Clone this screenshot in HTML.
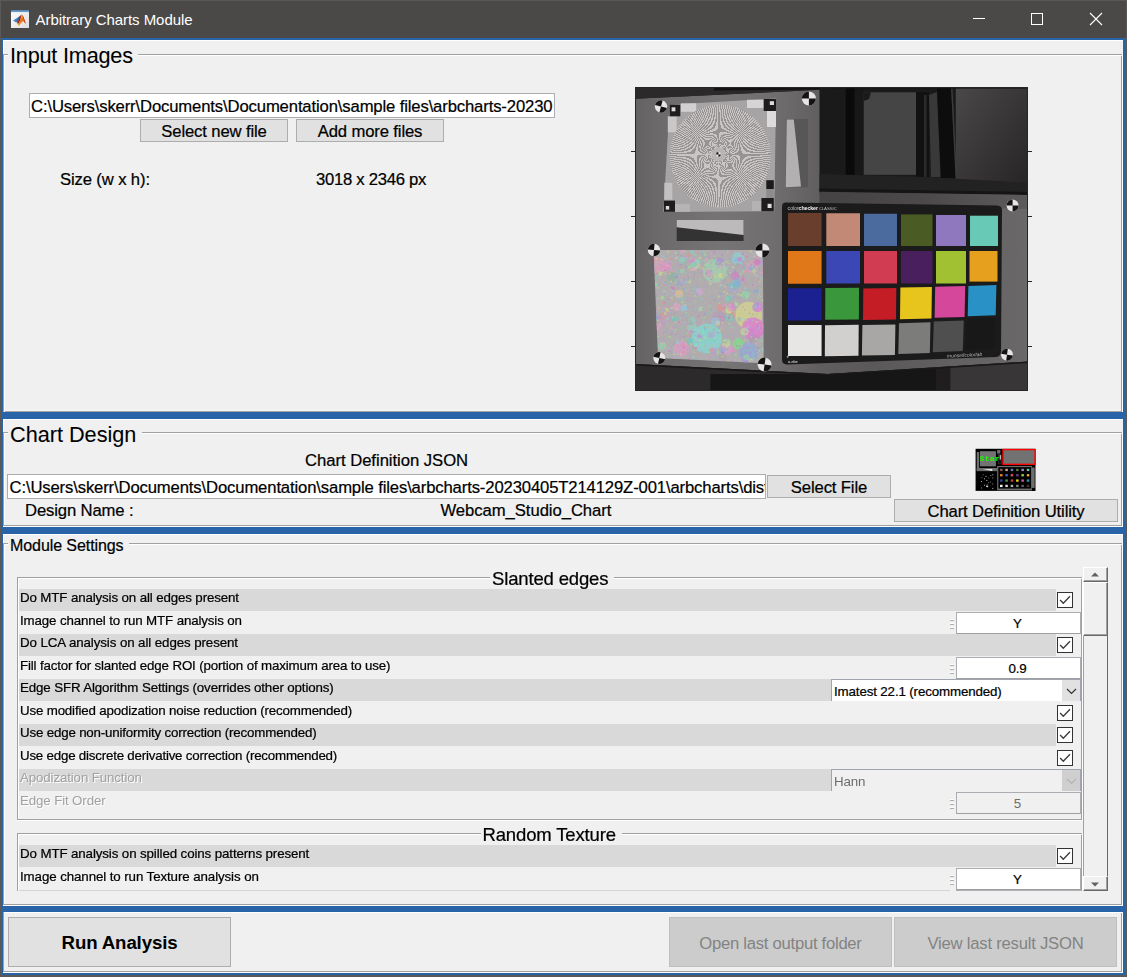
<!DOCTYPE html>
<html>
<head>
<meta charset="utf-8">
<title>Arbitrary Charts Module</title>
<style>
html,body{margin:0;padding:0;}
body{-webkit-text-stroke:0.22px currentColor;width:1127px;height:977px;overflow:hidden;position:relative;background:#2a64a8;font-family:"Liberation Sans",sans-serif;color:#000;}
.abs,.abs *{position:absolute;box-sizing:border-box;}
div,span,svg{position:absolute;box-sizing:border-box;}
.t{white-space:nowrap;line-height:1;}
#frame{left:0;top:0;width:1127px;height:977px;background:#5b5957;}
#blue{left:1px;top:38px;width:1125px;height:937px;background:#2a64a8;}
#titlebar{left:1px;top:1px;width:1125px;height:37px;background:#4b4947;}
#titlebar .t{-webkit-text-stroke:0;color:#fff;font-size:15px;left:34.5px;top:11px;letter-spacing:-0.06px;}
.panel{background:#f0f0f0;left:3px;width:1120px;}
.gline{background:#a0a0a0;}
.wline{background:#fff;}
.ptitle{background:#f0f0f0;padding:0 2px;}
.btn{background:#e1e1e1;border:1px solid #adadad;text-align:center;font-size:16.67px;letter-spacing:-0.135px;white-space:nowrap;}
.btn.dis{background:#cccccc;border:1px solid #bfbfbf;color:#838383;-webkit-text-stroke:0;}
.edit{background:#fff;border:1px solid #abadb3;white-space:nowrap;overflow:hidden;}
.f16{font-size:16.67px;letter-spacing:-0.135px;}
.f13{font-size:13.33px;}
.row{left:19px;width:1037px;background:#d9d9d9;}
.lbl{left:20px;font-size:13.33px;letter-spacing:-0.135px;white-space:nowrap;line-height:1;}
.lbl.dis{color:#a0a0a0;text-shadow:1px 1px 0 #fff;-webkit-text-stroke:0;}
.cb{left:1057px;width:16px;height:16px;background:#fff;border:1px solid #333;}
.cb svg{left:0;top:0;width:14px;height:14px;}
.grip{left:950px;width:4px;height:11px;}
.grip i{position:absolute;left:0;width:4px;height:1px;background:#aeaeae;}
.grip b{position:absolute;left:0;width:4px;height:1px;background:#fff;}
.grip b{position:absolute;left:0;width:4px;height:1px;background:#fff;}
.grip b{position:absolute;left:0;width:4px;height:1px;background:#fff;}
.grip b{position:absolute;left:0;width:4px;height:1px;background:#fff;}
.grip b{position:absolute;left:0;width:4px;height:1px;background:#fff;}
.grip b{position:absolute;left:0;width:4px;height:1px;background:#fff;}
.grip b{position:absolute;left:0;width:4px;height:1px;background:#fff;}
.ed2{padding-right:2px;left:956px;width:125px;height:22px;background:#fff;border:1px solid #abadb3;border-bottom-color:#a0a0a0;text-align:center;font-size:13.33px;letter-spacing:-0.135px;}
.combo{left:831px;width:250px;height:22px;background:#fff;border-left:1px solid #a0a4b0;border-top:1px solid #a0a4b0;border-right:1px solid #a0a4b0;font-size:13.33px;letter-spacing:-0.135px;}
</style>
</head>
<body>
<div id="frame"></div>
<div id="blue"></div>
<div id="titlebar">
  <svg id="mlicon" style="left:9.6px;top:8.6px;width:18.6px;height:18.6px" viewBox="0 0 18.6 18.6"><defs><linearGradient id="mlbg" x1="0" y1="0" x2="1" y2="1"><stop offset="0" stop-color="#ffffff"/><stop offset="1" stop-color="#dcdce0"/></linearGradient>
<linearGradient id="mlbl" x1="0" y1="1" x2="1" y2="0"><stop offset="0" stop-color="#4a9ad8"/><stop offset="1" stop-color="#23508c"/></linearGradient>
<linearGradient id="mlor" x1="0" y1="0" x2="0" y2="1"><stop offset="0" stop-color="#e8a024"/><stop offset="0.45" stop-color="#ea6c1e"/><stop offset="0.8" stop-color="#ec8a22"/><stop offset="1" stop-color="#f0b82c"/></linearGradient>
<filter id="mlf" color-interpolation-filters="sRGB"><feGaussianBlur stdDeviation="0.35"/></filter></defs>
<rect x="0" y="0" width="18.4" height="18.4" fill="url(#mlbg)"/>
<rect x="0" y="0" width="18.4" height="2.1" fill="#6a9cc8"/><rect x="0" y="0" width="18.4" height="0.6" fill="#4a7aa8"/>
<g filter="url(#mlf)">
<path d="M2 10.6L6.6 7.7L9.7 5.2L9.3 8L6.6 12.4L4.6 12.2Z" fill="url(#mlbl)"/>
<path d="M10.3 4.3L9.2 6.5L6.2 12.4L7 14.4L9 11L10.2 7Z" fill="#a3221a"/>
<path d="M10.7 4.1L12.2 6.6L13.6 10.4L14.9 13.7L13.4 12.3L11.9 11.3L10.2 13L8.8 15L7.6 15.9L6.9 14.3L8.6 11.4L9.9 7.4Z" fill="url(#mlor)"/>
<path d="M11.2 4.4L12.6 7L14.9 13.7L13.6 12.4L12.4 9Z" fill="#c8321e"/>
<path d="M10.6 4.6L11.1 6.6L10.9 9.4L10.2 7.4Z" fill="#f0b428"/>
</g></svg>
  <span class="t">Arbitrary Charts Module</span>
  <svg style="left:970px;top:-1px;width:156px;height:38px" viewBox="0 0 156 38">
    <path d="M2 18.5H14" stroke="#fff" stroke-width="1" fill="none"/>
    <rect x="60.5" y="13.5" width="11" height="11" stroke="#fff" stroke-width="1" fill="none"/>
    <path d="M119 13L131 25M131 13L119 25" stroke="#fff" stroke-width="1.1" fill="none"/>
  </svg>
</div>

<!-- ============ PANEL 1 : Input Images ============ -->
<div class="panel" id="p1" style="top:40px;height:372px;">
  <div class="wline" style="left:0;top:0;width:1120px;height:1px"></div>
  <div class="wline" style="left:0;top:0;width:1px;height:14px"></div>
  <div class="gline" style="left:0;top:14px;width:1120px;height:1px"></div>
  <div class="wline" style="left:1px;top:15px;width:1117px;height:1px"></div>
  <div class="gline" style="left:0;top:14px;width:1px;height:358px"></div>
  <div class="wline" style="left:1px;top:15px;width:1px;height:357px"></div>
  <div class="gline" style="left:1118px;top:16px;width:1px;height:355px"></div>
  <div class="wline" style="left:1119px;top:14px;width:1px;height:358px"></div>
  <div class="wline" style="left:2px;top:370px;width:1116px;height:1px;background:#f6f6f6"></div>
  <div class="gline" style="left:2px;top:371px;width:1117px;height:1px;background:#a8a4a0"></div>
  <div class="ptitle t" style="left:5px;top:4px;font-size:21.67px;height:22px;line-height:24px;letter-spacing:-0.2px;padding-right:5px;-webkit-text-stroke:0.08px #000;">Input Images</div>

  <div class="edit f16" style="left:26px;top:53px;width:526px;height:25px;"><span class="t" style="left:1px;top:5px;">C:\Users\skerr\Documents\Documentation\sample files\arbcharts-20230</span></div>
  <div class="btn" style="left:137px;top:79px;width:148px;height:23px;line-height:23px;">Select new file</div>
  <div class="btn" style="left:293px;top:79px;width:148px;height:23px;line-height:23px;">Add more files</div>
  <span class="t f16" style="left:57px;top:132px;">Size (w x h):</span>
  <span class="t f16" style="left:313px;top:132px;letter-spacing:-0.27px;">3018 x 2346 px</span>

  <!-- axes ticks -->
  <div style="left:628px;top:111px;width:4px;height:1px;background:#262626"></div>
  <div style="left:628px;top:176px;width:4px;height:1px;background:#262626"></div>
  <div style="left:628px;top:241px;width:4px;height:1px;background:#262626"></div>
  <div style="left:628px;top:306px;width:4px;height:1px;background:#262626"></div>
  <div style="left:1025px;top:111px;width:4px;height:1px;background:#262626"></div>
  <div style="left:1025px;top:176px;width:4px;height:1px;background:#262626"></div>
  <div style="left:1025px;top:241px;width:4px;height:1px;background:#262626"></div>
  <div style="left:1025px;top:306px;width:4px;height:1px;background:#262626"></div>
  <svg id="photo" style="left:632px;top:47px;width:393px;height:304px" viewBox="0 0 393 304">
<defs><linearGradient id="gbg" x1="0" y1="0" x2="1" y2="0"><stop offset="0" stop-color="#636161"/><stop offset="0.06" stop-color="#6c6a6a"/><stop offset="0.22" stop-color="#767474"/><stop offset="0.36" stop-color="#6f6d6d"/><stop offset="0.47" stop-color="#605e5e"/><stop offset="0.6" stop-color="#5a5858"/><stop offset="0.9" stop-color="#666464"/><stop offset="1" stop-color="#6a6868"/></linearGradient><linearGradient id="gsh" x1="0" y1="0" x2="1" y2="0"><stop offset="0" stop-color="#454343"/><stop offset="0.5" stop-color="#4b4949"/><stop offset="1" stop-color="#5c5a5a"/></linearGradient><linearGradient id="gdr" x1="0" y1="0" x2="1" y2="1"><stop offset="0" stop-color="#4a4848"/><stop offset="1" stop-color="#262424"/></linearGradient><clipPath id="coinclip"><path d="M18.6 163L127.8 163L128.7 276.2L23 270.9Z"/></clipPath><clipPath id="starclip"><ellipse cx="85.2" cy="69" rx="50.6" ry="51.4"/></clipPath><filter id="bl" x="-5%" y="-5%" width="110%" height="110%" color-interpolation-filters="sRGB"><feGaussianBlur stdDeviation="0.45"/></filter></defs><g filter="url(#bl)"><rect width="393" height="304" fill="#242222"/><path d="M0 11.8L185 2.8L185 105L393 108L393 274.5L193 287L0 277Z" fill="url(#gbg)"/><path d="M0 0H185V2.8L0 11.8Z" fill="#2b2929"/><path d="M79 0H185V2.6L79 3.6Z" fill="#141313"/><rect x="184.5" y="0" width="208.5" height="106" fill="#1b1a1a"/><rect x="320.8" y="0" width="72.2" height="100" fill="url(#gdr)"/><rect x="228.5" y="5.3" width="52.5" height="82.5" fill="#464545"/><path d="M228.5 5.3L236 5.3L234 12L228.5 14Z" fill="#1b1a1a"/><rect x="210.7" y="0" width="9" height="88" fill="#0a0a0a"/><rect x="219.7" y="0" width="8.8" height="88" fill="#191818"/><rect x="281" y="5" width="13" height="85" fill="#121111"/><path d="M294 8L302 5L305.5 90L296 90Z" fill="#3a3939"/><rect x="289" y="8" width="2.5" height="82" fill="#2c2b2b"/><path d="M302 0L316 0L321 91L306 91Z" fill="#0e0d0d"/><path d="M316 0L317.5 0L322 91L320.5 91Z" fill="#3c3b3b"/><path d="M184.5 87L290 90L393 95.8L393 108L184.5 104.7Z" fill="#232222"/><path d="M184.5 101.5L393 105L393 108L184.5 104.7Z" fill="#161515"/><rect x="193" y="0" width="200" height="1.6" fill="#181717"/><path d="M184.5 104.7L393 108L393 122L184.5 118Z" fill="url(#gsh)"/><path d="M0 277L193 287L393 274.5L393 304L0 304Z" fill="#2c2a2a"/><path d="M75.4 287L193 287L301 281L301 304L75.4 304Z" fill="#171616"/><path d="M301 281L315.5 280L315.5 304L301 304Z" fill="#1f1d1d"/><path d="M315.5 280L393 275L393 304L315.5 304Z" fill="#383636"/><path d="M0 277L193 287L393 274.5L393 276L193 288.6L0 278.6Z" fill="#1a1919"/><path d="M34.6 17.7L141 11.5L139.3 124.2L28.4 125.1Z" fill="#a6a4a4"/><rect x="45.8" y="16.3" width="15.4" height="8.5" fill="#d2d0d0"/><rect x="32.8" y="29.3" width="8.9" height="16.0" fill="#c9c7c7"/><rect x="112" y="12.8" width="16.7" height="8.2" fill="#d6d4d4"/><rect x="132" y="24" width="9" height="16" fill="#dddbdb"/><rect x="29.3" y="95.8" width="8.0" height="16.9" fill="#c2c0c0"/><rect x="40" y="117" width="15" height="7.8" fill="#b6b4b4"/><rect x="117" y="114" width="9.4" height="10" fill="#b4b2b2"/><rect x="131.3" y="102" width="7.5" height="9" fill="#8e8c8c"/><rect x="34.6" y="17.7" width="10.7" height="11.6" fill="#1e1d1d"/><rect x="36.6" y="20.3" width="3.8" height="4.0" fill="#dcdcdc"/><rect x="128.7" y="12" width="12.3" height="12" fill="#1e1d1d"/><rect x="134.8" y="14.2" width="4.2" height="3.8" fill="#dcdcdc"/><rect x="29" y="113.6" width="11" height="11.2" fill="#1e1d1d"/><rect x="30.8" y="119" width="3.4" height="3.6" fill="#dcdcdc"/><rect x="126.4" y="111" width="12.4" height="13.2" fill="#1e1d1d"/><rect x="132.6" y="116.8" width="4.0" height="4.2" fill="#dcdcdc"/><rect x="131.3" y="93.2" width="7.5" height="8.8" fill="#1c1b1b"/><ellipse cx="85.2" cy="69" rx="50.6" ry="51.4" fill="#c9c5c5"/></g><g clip-path="url(#starclip)" fill="#6a6666" opacity="0.52" shape-rendering="crispEdges"><path d="M89.60 67.73L139.59 68.84L139.55 70.08L89.59 67.87ZM89.59 68.00L139.48 71.32L139.39 72.56L89.58 68.13ZM89.56 68.26L139.27 73.79L139.12 75.03L89.55 68.40ZM89.53 68.53L138.95 76.26L138.75 77.48L89.51 68.66ZM89.48 68.79L138.52 78.70L138.27 79.91L89.46 68.92ZM89.43 69.05L138.00 81.12L137.69 82.33L89.40 69.18ZM89.36 69.31L137.36 83.52L137.01 84.71L89.32 69.43ZM89.28 69.56L136.63 85.89L136.22 87.06L89.24 69.68ZM89.19 69.81L135.79 88.22L135.34 89.37L89.14 69.93ZM89.09 70.06L134.86 90.51L134.35 91.65L89.04 70.18ZM88.98 70.30L133.82 92.76L133.27 93.87L88.92 70.41ZM88.86 70.53L132.70 94.97L132.10 96.05L88.80 70.65ZM88.73 70.76L131.48 97.12L130.83 98.17L88.66 70.88ZM88.59 70.99L130.16 99.21L129.47 100.23L88.51 71.10ZM88.44 71.20L128.76 101.24L128.03 102.24L88.36 71.31ZM88.28 71.42L127.27 103.21L126.50 104.17L88.20 71.52ZM88.11 71.62L125.70 105.11L124.89 106.04L88.02 71.72ZM87.93 71.82L124.05 106.94L123.20 107.83L87.84 71.91ZM87.75 72.00L122.32 108.70L121.43 109.55L87.65 72.09ZM87.56 72.18L120.52 110.38L119.60 111.18L87.46 72.27ZM87.36 72.35L118.65 111.97L117.69 112.74L87.25 72.44ZM87.15 72.52L116.71 113.48L115.72 114.21L87.04 72.59ZM86.93 72.67L114.71 114.91L113.69 115.59L86.82 72.74ZM86.71 72.81L112.65 116.24L111.60 116.87L86.60 72.88ZM86.49 72.94L110.54 117.48L109.46 118.07L86.37 73.01ZM86.25 73.07L108.37 118.63L107.27 119.17L86.14 73.12ZM86.02 73.18L106.15 119.68L105.03 120.17L85.90 73.23ZM85.77 73.28L103.90 120.63L102.75 121.06L85.65 73.33ZM85.53 73.37L101.60 121.48L100.44 121.86L85.40 73.41ZM85.28 73.45L99.27 122.22L98.09 122.56L85.15 73.49ZM85.03 73.52L96.91 122.87L95.72 123.15L84.90 73.55ZM84.77 73.58L94.53 123.40L93.32 123.63L84.64 73.60ZM84.51 73.63L92.12 123.83L90.91 124.01L84.38 73.64ZM84.25 73.66L89.70 124.16L88.48 124.28L84.12 73.67ZM83.99 73.68L87.26 124.37L86.04 124.44L83.86 73.69ZM83.73 73.69L84.82 124.48L83.60 124.50L83.60 73.70ZM83.47 73.69L82.38 124.48L81.16 124.44L83.34 73.69ZM83.21 73.68L79.94 124.37L78.72 124.28L83.08 73.67ZM82.95 73.66L77.50 124.16L76.29 124.01L82.82 73.64ZM82.69 73.63L75.08 123.83L73.88 123.63L82.56 73.60ZM82.43 73.58L72.67 123.40L71.48 123.15L82.30 73.55ZM82.17 73.52L70.29 122.87L69.11 122.56L82.05 73.49ZM81.92 73.45L67.93 122.22L66.76 121.86L81.80 73.41ZM81.67 73.37L65.60 121.48L64.45 121.06L81.55 73.33ZM81.43 73.28L63.30 120.63L62.17 120.17L81.30 73.23ZM81.18 73.18L61.05 119.68L59.93 119.17L81.06 73.12ZM80.95 73.07L58.83 118.63L57.74 118.07L80.83 73.01ZM80.71 72.94L56.66 117.48L55.60 116.87L80.60 72.88ZM80.49 72.81L54.55 116.24L53.51 115.59L80.38 72.74ZM80.27 72.67L52.49 114.91L51.48 114.21L80.16 72.59ZM80.05 72.52L50.49 113.48L49.51 112.74L79.95 72.44ZM79.84 72.35L48.55 111.97L47.60 111.18L79.74 72.27ZM79.64 72.18L46.68 110.38L45.77 109.55L79.55 72.09ZM79.45 72.00L44.88 108.70L44.00 107.83L79.36 71.91ZM79.27 71.82L43.15 106.94L42.31 106.04L79.18 71.72ZM79.09 71.62L41.50 105.11L40.70 104.17L79.00 71.52ZM78.92 71.42L39.93 103.21L39.17 102.24L78.84 71.31ZM78.76 71.20L38.44 101.24L37.73 100.23L78.69 71.10ZM78.61 70.99L37.04 99.21L36.37 98.17L78.54 70.88ZM78.47 70.76L35.72 97.12L35.10 96.05L78.40 70.65ZM78.34 70.53L34.50 94.97L33.93 93.87L78.28 70.41ZM78.22 70.30L33.38 92.76L32.85 91.65L78.16 70.18ZM78.11 70.06L32.34 90.51L31.86 89.37L78.06 69.93ZM78.01 69.81L31.41 88.22L30.98 87.06L77.96 69.68ZM77.92 69.56L30.57 85.89L30.19 84.71L77.88 69.43ZM77.84 69.31L29.84 83.52L29.51 82.33L77.80 69.18ZM77.77 69.05L29.20 81.12L28.93 79.91L77.74 68.92ZM77.72 68.79L28.68 78.70L28.45 77.48L77.69 68.66ZM77.67 68.53L28.25 76.26L28.08 75.03L77.65 68.40ZM77.64 68.26L27.93 73.79L27.81 72.56L77.62 68.13ZM77.61 68.00L27.72 71.32L27.65 70.08L77.61 67.87ZM77.60 67.73L27.61 68.84L27.60 67.60L77.60 67.60ZM77.60 67.47L27.61 66.36L27.65 65.12L77.61 67.33ZM77.61 67.20L27.72 63.88L27.81 62.64L77.62 67.07ZM77.64 66.94L27.93 61.41L28.08 60.17L77.65 66.80ZM77.67 66.67L28.25 58.94L28.45 57.72L77.69 66.54ZM77.72 66.41L28.68 56.50L28.93 55.29L77.74 66.28ZM77.77 66.15L29.20 54.08L29.51 52.87L77.80 66.02ZM77.84 65.89L29.84 51.68L30.19 50.49L77.88 65.77ZM77.92 65.64L30.57 49.31L30.98 48.14L77.96 65.52ZM78.01 65.39L31.41 46.98L31.86 45.83L78.06 65.27ZM78.11 65.14L32.34 44.69L32.85 43.55L78.16 65.02ZM78.22 64.90L33.38 42.44L33.93 41.33L78.28 64.79ZM78.34 64.67L34.50 40.23L35.10 39.15L78.40 64.55ZM78.47 64.44L35.72 38.08L36.37 37.03L78.54 64.32ZM78.61 64.21L37.04 35.99L37.73 34.97L78.69 64.10ZM78.76 64.00L38.44 33.96L39.17 32.96L78.84 63.89ZM78.92 63.78L39.93 31.99L40.70 31.03L79.00 63.68ZM79.09 63.58L41.50 30.09L42.31 29.16L79.18 63.48ZM79.27 63.38L43.15 28.26L44.00 27.37L79.36 63.29ZM79.45 63.20L44.88 26.50L45.77 25.65L79.55 63.11ZM79.64 63.02L46.68 24.82L47.60 24.02L79.74 62.93ZM79.84 62.85L48.55 23.23L49.51 22.46L79.95 62.76ZM80.05 62.68L50.49 21.72L51.48 20.99L80.16 62.61ZM80.27 62.53L52.49 20.29L53.51 19.61L80.38 62.46ZM80.49 62.39L54.55 18.96L55.60 18.33L80.60 62.32ZM80.71 62.26L56.66 17.72L57.74 17.13L80.83 62.19ZM80.95 62.13L58.83 16.57L59.93 16.03L81.06 62.08ZM81.18 62.02L61.05 15.52L62.17 15.03L81.30 61.97ZM81.43 61.92L63.30 14.57L64.45 14.14L81.55 61.87ZM81.67 61.83L65.60 13.72L66.76 13.34L81.80 61.79ZM81.92 61.75L67.93 12.98L69.11 12.64L82.05 61.71ZM82.17 61.68L70.29 12.33L71.48 12.05L82.30 61.65ZM82.43 61.62L72.67 11.80L73.88 11.57L82.56 61.60ZM82.69 61.57L75.08 11.37L76.29 11.19L82.82 61.56ZM82.95 61.54L77.50 11.04L78.72 10.92L83.08 61.53ZM83.21 61.52L79.94 10.83L81.16 10.76L83.34 61.51ZM83.47 61.51L82.38 10.72L83.60 10.70L83.60 61.50ZM83.73 61.51L84.82 10.72L86.04 10.76L83.86 61.51ZM83.99 61.52L87.26 10.83L88.48 10.92L84.12 61.53ZM84.25 61.54L89.70 11.04L90.91 11.19L84.38 61.56ZM84.51 61.57L92.12 11.37L93.32 11.57L84.64 61.60ZM84.77 61.62L94.53 11.80L95.72 12.05L84.90 61.65ZM85.03 61.68L96.91 12.33L98.09 12.64L85.15 61.71ZM85.28 61.75L99.27 12.98L100.44 13.34L85.40 61.79ZM85.53 61.83L101.60 13.72L102.75 14.14L85.65 61.87ZM85.77 61.92L103.90 14.57L105.03 15.03L85.90 61.97ZM86.02 62.02L106.15 15.52L107.27 16.03L86.14 62.08ZM86.25 62.13L108.37 16.57L109.46 17.13L86.37 62.19ZM86.49 62.26L110.54 17.72L111.60 18.33L86.60 62.32ZM86.71 62.39L112.65 18.96L113.69 19.61L86.82 62.46ZM86.93 62.53L114.71 20.29L115.72 20.99L87.04 62.61ZM87.15 62.68L116.71 21.72L117.69 22.46L87.25 62.76ZM87.36 62.85L118.65 23.23L119.60 24.02L87.46 62.93ZM87.56 63.02L120.52 24.82L121.43 25.65L87.65 63.11ZM87.75 63.20L122.32 26.50L123.20 27.37L87.84 63.29ZM87.93 63.38L124.05 28.26L124.89 29.16L88.02 63.48ZM88.11 63.58L125.70 30.09L126.50 31.03L88.20 63.68ZM88.28 63.78L127.27 31.99L128.03 32.96L88.36 63.89ZM88.44 64.00L128.76 33.96L129.47 34.97L88.51 64.10ZM88.59 64.21L130.16 35.99L130.83 37.03L88.66 64.32ZM88.73 64.44L131.48 38.08L132.10 39.15L88.80 64.55ZM88.86 64.67L132.70 40.23L133.27 41.33L88.92 64.79ZM88.98 64.90L133.82 42.44L134.35 43.55L89.04 65.02ZM89.09 65.14L134.86 44.69L135.34 45.83L89.14 65.27ZM89.19 65.39L135.79 46.98L136.22 48.14L89.24 65.52ZM89.28 65.64L136.63 49.31L137.01 50.49L89.32 65.77ZM89.36 65.89L137.36 51.68L137.69 52.87L89.40 66.02ZM89.43 66.15L138.00 54.08L138.27 55.29L89.46 66.28ZM89.48 66.41L138.52 56.50L138.75 57.72L89.51 66.54ZM89.53 66.67L138.95 58.94L139.12 60.17L89.55 66.80ZM89.56 66.94L139.27 61.41L139.39 62.64L89.58 67.07ZM89.59 67.20L139.48 63.88L139.55 65.12L89.59 67.33ZM89.60 67.47L139.59 66.36L139.60 67.60L89.60 67.60Z"/></g><ellipse cx="83.6" cy="67.6" rx="7" ry="7" fill="#b8b4b4"/><g filter="url(#bl)"><circle cx="83.4" cy="67.4" r="2.4" fill="#e8e8e8"/><path d="M83.4 67.4L81 67.4A2.4 2.4 0 0 1 83.4 65Z M83.4 67.4L85.8 67.4A2.4 2.4 0 0 1 83.4 69.8Z" fill="#111"/><path d="M150.8 32L173 32L173 100.3L150.8 100.3Z" fill="#585757"/><path d="M151.7 32.5L158.8 32.5L166 99.6L150.8 100.3Z" fill="#b2b0b0"/><path d="M41.7 133L108.6 133L108.6 154L41.7 154Z" fill="#343333"/><path d="M41.7 133L108.6 133L108.6 148L41.7 140.2Z" fill="#bcbaba"/><path d="M18.6 163L127.8 163L128.7 276.2L23 270.9Z" fill="#b1adaf"/><g clip-path="url(#coinclip)"><circle cx="71.9" cy="251.4" r="15" fill="#86d6cf" opacity="0.8"/><circle cx="113.6" cy="228.3" r="13.5" fill="#d6d68e" opacity="0.75"/><circle cx="118" cy="241.6" r="11" fill="#dc7fcf" opacity="0.85"/><circle cx="79.9" cy="184" r="12" fill="#9fdcae" opacity="0.6"/><circle cx="103" cy="171.5" r="6.5" fill="#8ad0d8" opacity="0.7"/><circle cx="122.4" cy="220.3" r="5" fill="#c58ad8" opacity="0.85"/><circle cx="103" cy="256.7" r="5.5" fill="#7fdc8a" opacity="0.8"/><circle cx="113.6" cy="265.6" r="10" fill="#8fa8d8" opacity="0.7"/><circle cx="23" cy="178" r="8" fill="#e49ac0" opacity="0.6"/><circle cx="46" cy="262" r="8" fill="#e49ac8" opacity="0.6"/><circle cx="37" cy="190" r="5" fill="#8fb0a0" opacity="0.7"/><circle cx="84" cy="231" r="7" fill="#b89ab8" opacity="0.6"/><circle cx="117" cy="180" r="6" fill="#dca0b8" opacity="0.6"/><circle cx="44" cy="207" r="4" fill="#e0c08a" opacity="0.7"/><circle cx="60" cy="178" r="5" fill="#c8e0a0" opacity="0.5"/><circle cx="98" cy="200" r="5" fill="#b0a0e0" opacity="0.5"/><circle cx="30" cy="232" r="5" fill="#c0a0d0" opacity="0.5"/><circle cx="57" cy="240" r="5" fill="#90d8c8" opacity="0.5"/><circle cx="92" cy="262" r="6" fill="#e0a0d0" opacity="0.5"/><circle cx="53.9" cy="180.2" r="1.5" fill="#9ae090" opacity="0.65"/><circle cx="28.4" cy="229.4" r="4" fill="#e49090" opacity="0.45"/><circle cx="27.5" cy="210.7" r="2" fill="#9ae090" opacity="0.65"/><circle cx="65.1" cy="257.3" r="1.5" fill="#8acce8" opacity="0.65"/><circle cx="87.6" cy="271.0" r="4" fill="#a4a0a2" opacity="0.45"/><circle cx="126.4" cy="168.3" r="2" fill="#90d8a8" opacity="0.55"/><circle cx="34.0" cy="176.4" r="2.5" fill="#80acE0" opacity="0.45"/><circle cx="82.6" cy="235.8" r="2.5" fill="#dcdc80" opacity="0.65"/><circle cx="97.0" cy="227.3" r="4" fill="#e49090" opacity="0.55"/><circle cx="93.5" cy="211.7" r="2.5" fill="#5fd0c0" opacity="0.65"/><circle cx="120.5" cy="204.2" r="2" fill="#80acE0" opacity="0.65"/><circle cx="104.6" cy="172.3" r="2.5" fill="#d870c8" opacity="0.55"/><circle cx="99.0" cy="195.8" r="1.5" fill="#dcdc80" opacity="0.65"/><circle cx="64.4" cy="249.3" r="2" fill="#d870c8" opacity="0.55"/><circle cx="22.4" cy="239.2" r="4" fill="#ec9ccc" opacity="0.55"/><circle cx="95.2" cy="230.8" r="4" fill="#5fd0c0" opacity="0.45"/><circle cx="111.2" cy="270.7" r="3.2" fill="#9ae090" opacity="0.45"/><circle cx="99.2" cy="198.3" r="4" fill="#5fd0c0" opacity="0.55"/><circle cx="97.5" cy="264.1" r="2.5" fill="#e88cc4" opacity="0.55"/><circle cx="57.5" cy="232.6" r="3.2" fill="#7fd6cc" opacity="0.45"/><circle cx="103.3" cy="177.7" r="2" fill="#a4a0a2" opacity="0.55"/><circle cx="119.8" cy="219.6" r="2" fill="#5fd0c0" opacity="0.55"/><circle cx="79.0" cy="263.7" r="3.2" fill="#c890d8" opacity="0.65"/><circle cx="64.1" cy="203.9" r="3.2" fill="#8acce8" opacity="0.45"/><circle cx="27.2" cy="180.2" r="2" fill="#e88cc4" opacity="0.55"/><circle cx="110.3" cy="183.8" r="2.5" fill="#e88cc4" opacity="0.45"/><circle cx="64.5" cy="205.1" r="4" fill="#ec9ccc" opacity="0.45"/><circle cx="94.6" cy="221.8" r="4" fill="#7fd6cc" opacity="0.55"/><circle cx="117.8" cy="251.9" r="4" fill="#a4a0a2" opacity="0.55"/><circle cx="62.3" cy="174.8" r="3.2" fill="#7fd6cc" opacity="0.45"/><circle cx="25.5" cy="186.8" r="2" fill="#dcdc80" opacity="0.55"/><circle cx="84.7" cy="174.7" r="4" fill="#aa8cd8" opacity="0.65"/><circle cx="29.3" cy="204.5" r="1.5" fill="#9ae090" opacity="0.45"/><circle cx="86.2" cy="179.9" r="2.5" fill="#bcbcbc" opacity="0.65"/><circle cx="58.4" cy="177.0" r="3.2" fill="#5fd0c0" opacity="0.55"/><circle cx="71.7" cy="172.8" r="1.5" fill="#ec9ccc" opacity="0.65"/><circle cx="47.4" cy="257.5" r="2" fill="#e88cc4" opacity="0.45"/><circle cx="123.6" cy="223.2" r="2" fill="#e88cc4" opacity="0.65"/><circle cx="51.1" cy="236.3" r="1.5" fill="#c890d8" opacity="0.65"/><circle cx="58.7" cy="182.0" r="2" fill="#ec9ccc" opacity="0.65"/><circle cx="42.8" cy="255.5" r="2" fill="#8acce8" opacity="0.55"/><circle cx="100.1" cy="188.8" r="4" fill="#d870c8" opacity="0.55"/><circle cx="99.1" cy="275.8" r="2.5" fill="#d870c8" opacity="0.55"/><circle cx="39.5" cy="232.0" r="2.5" fill="#5fd0c0" opacity="0.65"/><circle cx="127.7" cy="271.9" r="2.5" fill="#9ae090" opacity="0.45"/><circle cx="29.3" cy="216.6" r="2.5" fill="#e49090" opacity="0.55"/><circle cx="87.3" cy="265.6" r="1.5" fill="#d870c8" opacity="0.65"/><circle cx="56.2" cy="236.3" r="1.5" fill="#a4a0a2" opacity="0.65"/><circle cx="101.3" cy="217.5" r="2" fill="#b8e090" opacity="0.65"/><circle cx="54.9" cy="254.3" r="3.2" fill="#5fd0c0" opacity="0.55"/><circle cx="100.5" cy="172.7" r="2" fill="#80acE0" opacity="0.45"/><circle cx="21.1" cy="230.4" r="3.2" fill="#aa8cd8" opacity="0.65"/><circle cx="109.7" cy="274.8" r="2.5" fill="#aa8cd8" opacity="0.65"/><circle cx="78.9" cy="165.4" r="1.5" fill="#aa8cd8" opacity="0.55"/><circle cx="127.5" cy="185.2" r="2" fill="#e88cc4" opacity="0.55"/><circle cx="41.6" cy="220.1" r="4" fill="#ec9ccc" opacity="0.55"/><circle cx="78.4" cy="258.1" r="1.5" fill="#bcbcbc" opacity="0.55"/><circle cx="91.5" cy="255.9" r="4" fill="#b8e090" opacity="0.65"/><circle cx="32.5" cy="180.3" r="4" fill="#e88cc4" opacity="0.55"/><circle cx="104.2" cy="232.4" r="2" fill="#80acE0" opacity="0.45"/><circle cx="70.6" cy="245.7" r="4" fill="#7fd6cc" opacity="0.55"/><circle cx="93.7" cy="223.5" r="3.2" fill="#dcdc80" opacity="0.65"/><circle cx="24.3" cy="184.8" r="1.5" fill="#dcdc80" opacity="0.65"/><circle cx="68.2" cy="166.2" r="1.5" fill="#5fd0c0" opacity="0.55"/><circle cx="86.0" cy="220.6" r="4" fill="#e49090" opacity="0.65"/><circle cx="48.8" cy="220.9" r="3.2" fill="#8acce8" opacity="0.65"/><circle cx="76.1" cy="262.9" r="2.5" fill="#e49090" opacity="0.55"/><circle cx="33.2" cy="176.9" r="3.2" fill="#ec9ccc" opacity="0.45"/><circle cx="92.5" cy="211.8" r="2" fill="#90d8a8" opacity="0.45"/><circle cx="117.6" cy="180.6" r="2.5" fill="#aa8cd8" opacity="0.55"/><circle cx="116.0" cy="273.3" r="2" fill="#dcdc80" opacity="0.55"/><circle cx="116.2" cy="181.6" r="2" fill="#80acE0" opacity="0.65"/><circle cx="65.9" cy="221.8" r="2.5" fill="#b8e090" opacity="0.45"/><circle cx="57.6" cy="173.5" r="2.5" fill="#e88cc4" opacity="0.55"/><circle cx="79.5" cy="213.2" r="1.5" fill="#a4a0a2" opacity="0.55"/><circle cx="75.4" cy="196.7" r="1.5" fill="#dcdc80" opacity="0.45"/><circle cx="125.9" cy="174.9" r="2.5" fill="#c890d8" opacity="0.45"/><circle cx="118.6" cy="183.7" r="2" fill="#b8e090" opacity="0.65"/><circle cx="108.9" cy="192.5" r="2" fill="#d870c8" opacity="0.65"/><circle cx="54.3" cy="194.8" r="2" fill="#b8e090" opacity="0.45"/><circle cx="47.9" cy="164.9" r="1.5" fill="#c890d8" opacity="0.45"/><circle cx="85.5" cy="188.4" r="2.5" fill="#dcdc80" opacity="0.55"/><circle cx="19.3" cy="276.4" r="3.2" fill="#c890d8" opacity="0.65"/><circle cx="32.3" cy="223.1" r="2" fill="#dcdc80" opacity="0.45"/><circle cx="47.1" cy="183.7" r="2.5" fill="#90d8a8" opacity="0.65"/><circle cx="102.3" cy="196.1" r="4" fill="#80acE0" opacity="0.55"/><circle cx="56.5" cy="165.1" r="2.5" fill="#7fd6cc" opacity="0.45"/><circle cx="20.0" cy="220.6" r="2" fill="#d870c8" opacity="0.45"/><circle cx="121.7" cy="175.1" r="3.2" fill="#d870c8" opacity="0.65"/><circle cx="110.6" cy="207.8" r="4" fill="#90d8a8" opacity="0.65"/><circle cx="41.9" cy="189.2" r="2" fill="#aa8cd8" opacity="0.55"/><circle cx="127.8" cy="274.9" r="2" fill="#e88cc4" opacity="0.45"/><circle cx="87.4" cy="263.3" r="3.2" fill="#80acE0" opacity="0.45"/><circle cx="27.4" cy="258.9" r="4" fill="#90d8a8" opacity="0.65"/><circle cx="44.9" cy="196.4" r="3.2" fill="#80acE0" opacity="0.45"/><circle cx="47.9" cy="163.4" r="2.5" fill="#ec9ccc" opacity="0.65"/><circle cx="53.9" cy="166.9" r="2.5" fill="#e49090" opacity="0.55"/><circle cx="38.3" cy="201.2" r="1.5" fill="#d870c8" opacity="0.55"/><circle cx="73.8" cy="185.9" r="4" fill="#e88cc4" opacity="0.45"/><circle cx="47.3" cy="173.2" r="3.2" fill="#7fd6cc" opacity="0.55"/><circle cx="20.5" cy="197.7" r="2" fill="#9ae090" opacity="0.65"/><circle cx="124.3" cy="260.3" r="2" fill="#a4a0a2" opacity="0.55"/><circle cx="98.0" cy="219.3" r="2.5" fill="#aa8cd8" opacity="0.45"/><circle cx="109.6" cy="244.5" r="4" fill="#b8e090" opacity="0.65"/><circle cx="95.8" cy="220.6" r="4" fill="#e88cc4" opacity="0.65"/><circle cx="82.8" cy="264.8" r="2" fill="#9ae090" opacity="0.45"/><circle cx="22.6" cy="235.6" r="1.5" fill="#a4a0a2" opacity="0.55"/><circle cx="80.0" cy="234.6" r="4" fill="#8acce8" opacity="0.55"/><circle cx="47.3" cy="215.1" r="1.5" fill="#9ae090" opacity="0.65"/><circle cx="76.4" cy="248.0" r="3.2" fill="#c890d8" opacity="0.45"/><path d="M52.6 172.8h1.4v1.4h-1.4zM39.1 205.6h1.4v1.4h-1.4zM89.7 212.2h1.1v1.1h-1.1zM61.1 188.5h1.8v1.8h-1.8zM129.0 167.4h0.9v0.9h-0.9zM87.3 217.1h0.9v0.9h-0.9zM51.3 168.5h1.4v1.4h-1.4zM70.4 223.5h0.7v0.7h-0.7zM80.7 182.6h0.7v0.7h-0.7zM86.6 166.5h1.4v1.4h-1.4zM81.8 195.7h1.4v1.4h-1.4zM76.1 195.9h0.7v0.7h-0.7zM40.9 207.3h0.7v0.7h-0.7zM78.1 244.8h1.8v1.8h-1.8zM95.7 191.1h0.9v0.9h-0.9zM88.7 235.5h0.7v0.7h-0.7zM89.5 187.2h0.9v0.9h-0.9zM42.2 176.8h1.4v1.4h-1.4zM122.5 169.8h1.8v1.8h-1.8zM36.7 190.2h0.9v0.9h-0.9zM110.4 274.6h0.9v0.9h-0.9zM22.1 243.1h1.8v1.8h-1.8zM123.9 219.4h1.8v1.8h-1.8zM29.4 191.6h0.7v0.7h-0.7zM124.4 186.3h1.4v1.4h-1.4zM19.2 163.3h1.8v1.8h-1.8zM119.8 208.3h0.7v0.7h-0.7zM35.4 249.6h0.7v0.7h-0.7zM109.4 232.9h0.7v0.7h-0.7zM63.9 208.4h1.4v1.4h-1.4zM78.2 193.8h1.4v1.4h-1.4zM91.0 227.7h1.1v1.1h-1.1zM90.5 171.9h0.7v0.7h-0.7zM71.2 187.9h1.1v1.1h-1.1zM118.3 181.7h1.1v1.1h-1.1zM53.4 183.0h1.1v1.1h-1.1zM102.2 234.4h0.9v0.9h-0.9zM97.8 163.6h1.1v1.1h-1.1zM127.8 189.0h0.7v0.7h-0.7zM99.9 265.9h0.9v0.9h-0.9zM122.9 234.5h0.9v0.9h-0.9zM109.3 195.2h1.1v1.1h-1.1zM66.3 178.9h1.1v1.1h-1.1zM28.0 259.7h1.8v1.8h-1.8zM36.8 270.3h1.1v1.1h-1.1zM106.0 163.5h1.4v1.4h-1.4zM113.1 273.4h1.4v1.4h-1.4zM118.7 219.8h1.1v1.1h-1.1zM21.9 200.1h0.9v0.9h-0.9zM49.3 274.0h1.8v1.8h-1.8zM36.4 249.6h0.7v0.7h-0.7zM40.3 249.1h1.1v1.1h-1.1zM71.8 235.9h0.9v0.9h-0.9zM44.9 266.5h0.9v0.9h-0.9zM29.7 252.7h1.4v1.4h-1.4zM119.7 246.5h0.7v0.7h-0.7zM46.0 197.3h1.1v1.1h-1.1zM48.4 191.5h1.4v1.4h-1.4zM26.7 246.2h1.8v1.8h-1.8zM44.7 264.8h1.1v1.1h-1.1zM38.0 164.2h1.8v1.8h-1.8zM122.3 208.8h0.9v0.9h-0.9zM23.7 267.3h0.7v0.7h-0.7zM98.5 194.1h0.7v0.7h-0.7zM110.9 172.8h0.9v0.9h-0.9zM37.3 182.9h0.9v0.9h-0.9zM69.6 258.1h1.8v1.8h-1.8zM61.0 232.4h1.1v1.1h-1.1zM59.1 207.2h1.1v1.1h-1.1zM73.1 241.5h0.9v0.9h-0.9zM73.5 268.2h1.8v1.8h-1.8zM118.7 229.9h1.4v1.4h-1.4zM108.5 166.8h1.4v1.4h-1.4zM94.0 268.6h0.9v0.9h-0.9zM65.5 262.3h0.7v0.7h-0.7zM80.2 210.0h1.8v1.8h-1.8zM91.4 173.4h1.4v1.4h-1.4zM33.7 218.1h0.9v0.9h-0.9zM107.7 173.5h0.9v0.9h-0.9zM86.8 238.2h0.9v0.9h-0.9zM52.6 210.5h1.1v1.1h-1.1zM28.4 173.4h1.1v1.1h-1.1zM36.3 267.5h0.7v0.7h-0.7zM47.7 259.4h0.9v0.9h-0.9zM113.7 186.1h1.1v1.1h-1.1zM32.6 205.5h0.7v0.7h-0.7zM127.9 213.2h1.1v1.1h-1.1zM89.7 218.4h0.7v0.7h-0.7zM54.6 175.3h1.4v1.4h-1.4zM94.0 265.5h1.4v1.4h-1.4zM89.3 237.9h1.1v1.1h-1.1zM58.4 254.0h0.7v0.7h-0.7zM33.0 225.4h0.9v0.9h-0.9zM51.6 193.5h1.4v1.4h-1.4zM123.4 188.1h1.4v1.4h-1.4zM81.7 166.6h0.7v0.7h-0.7zM37.4 171.7h1.4v1.4h-1.4zM61.9 236.6h1.8v1.8h-1.8zM99.2 254.2h1.8v1.8h-1.8z" fill="#e88cc4" opacity="0.62"/><path d="M26.5 266.8h1.1v1.1h-1.1zM58.0 211.8h1.1v1.1h-1.1zM38.6 269.7h1.4v1.4h-1.4zM58.3 201.2h1.8v1.8h-1.8zM90.1 174.5h1.4v1.4h-1.4zM127.7 239.1h1.4v1.4h-1.4zM57.8 204.6h1.4v1.4h-1.4zM36.7 252.5h0.7v0.7h-0.7zM117.4 178.1h0.9v0.9h-0.9zM45.6 266.0h0.7v0.7h-0.7zM116.9 268.5h1.1v1.1h-1.1zM126.5 242.9h0.7v0.7h-0.7zM45.4 186.2h0.7v0.7h-0.7zM32.1 230.7h1.8v1.8h-1.8zM74.7 218.3h0.9v0.9h-0.9zM66.3 211.2h1.8v1.8h-1.8zM18.7 184.7h1.4v1.4h-1.4zM20.3 227.6h1.8v1.8h-1.8zM92.3 264.5h0.7v0.7h-0.7zM124.3 258.2h1.8v1.8h-1.8zM47.2 211.2h1.8v1.8h-1.8zM28.8 196.0h0.9v0.9h-0.9zM95.0 231.1h1.8v1.8h-1.8zM64.7 208.3h1.4v1.4h-1.4zM107.8 263.8h0.7v0.7h-0.7zM39.3 234.1h0.7v0.7h-0.7zM24.1 190.2h0.9v0.9h-0.9zM110.6 251.5h1.1v1.1h-1.1zM121.3 241.8h1.4v1.4h-1.4zM55.0 165.3h1.4v1.4h-1.4zM81.2 223.2h0.9v0.9h-0.9zM99.5 272.8h1.8v1.8h-1.8zM85.7 254.2h0.9v0.9h-0.9zM100.3 192.4h1.4v1.4h-1.4zM25.7 167.9h1.8v1.8h-1.8zM91.6 172.9h1.8v1.8h-1.8zM24.4 212.4h0.7v0.7h-0.7zM69.7 186.0h0.7v0.7h-0.7zM39.6 180.4h1.1v1.1h-1.1zM54.0 191.0h1.8v1.8h-1.8zM26.1 201.5h0.7v0.7h-0.7zM128.7 253.2h1.4v1.4h-1.4zM46.8 242.1h1.1v1.1h-1.1zM124.3 204.2h1.4v1.4h-1.4zM52.2 222.3h1.1v1.1h-1.1zM88.7 251.8h1.1v1.1h-1.1zM48.5 169.7h1.4v1.4h-1.4zM80.8 248.0h0.9v0.9h-0.9zM106.2 223.6h0.7v0.7h-0.7zM90.4 227.9h0.9v0.9h-0.9zM34.1 254.6h1.1v1.1h-1.1zM109.2 231.5h1.8v1.8h-1.8zM73.7 179.1h1.8v1.8h-1.8zM73.6 222.5h1.1v1.1h-1.1zM77.4 251.9h1.1v1.1h-1.1zM75.7 179.5h0.7v0.7h-0.7zM81.8 164.2h1.1v1.1h-1.1zM113.1 271.8h1.8v1.8h-1.8zM59.1 233.1h1.4v1.4h-1.4zM41.1 224.9h0.7v0.7h-0.7zM64.7 221.5h1.4v1.4h-1.4zM110.8 211.4h1.8v1.8h-1.8zM36.4 264.8h1.1v1.1h-1.1zM113.3 275.7h1.4v1.4h-1.4zM23.1 258.3h1.1v1.1h-1.1zM113.2 188.5h1.1v1.1h-1.1zM127.9 246.8h0.9v0.9h-0.9zM64.5 238.7h0.9v0.9h-0.9zM29.3 185.5h1.4v1.4h-1.4zM30.7 199.6h0.9v0.9h-0.9zM126.8 262.3h1.4v1.4h-1.4zM35.0 225.8h0.7v0.7h-0.7zM75.6 226.4h0.7v0.7h-0.7zM78.3 237.8h1.1v1.1h-1.1zM106.0 235.0h0.9v0.9h-0.9zM30.9 231.3h1.1v1.1h-1.1zM87.2 217.5h1.8v1.8h-1.8z" fill="#7fd6cc" opacity="0.62"/><path d="M128.3 207.1h0.9v0.9h-0.9zM59.3 207.8h1.8v1.8h-1.8zM73.3 239.9h1.4v1.4h-1.4zM93.8 185.6h1.1v1.1h-1.1zM51.0 245.3h1.8v1.8h-1.8zM61.5 181.2h1.4v1.4h-1.4zM35.8 211.6h0.7v0.7h-0.7zM91.7 180.6h1.8v1.8h-1.8zM19.6 225.9h1.4v1.4h-1.4zM52.9 232.3h1.4v1.4h-1.4zM22.5 177.9h1.1v1.1h-1.1zM108.3 182.9h1.1v1.1h-1.1zM59.6 212.8h1.4v1.4h-1.4zM50.8 268.9h0.9v0.9h-0.9zM105.6 207.6h1.8v1.8h-1.8zM33.4 236.4h0.7v0.7h-0.7zM40.1 271.8h1.8v1.8h-1.8zM96.2 224.3h0.9v0.9h-0.9zM57.5 208.7h1.4v1.4h-1.4zM121.1 260.4h0.7v0.7h-0.7zM39.9 242.0h1.8v1.8h-1.8zM39.3 244.3h0.9v0.9h-0.9zM86.5 234.5h1.8v1.8h-1.8zM81.9 267.7h1.4v1.4h-1.4zM70.8 210.0h0.7v0.7h-0.7zM65.4 164.1h0.7v0.7h-0.7zM120.4 204.7h0.9v0.9h-0.9zM19.3 164.7h1.8v1.8h-1.8zM69.0 173.0h1.1v1.1h-1.1zM114.2 205.4h1.4v1.4h-1.4zM120.8 206.9h0.7v0.7h-0.7zM97.0 185.4h0.7v0.7h-0.7zM55.2 259.0h1.4v1.4h-1.4zM57.5 269.3h1.8v1.8h-1.8zM50.8 251.0h0.9v0.9h-0.9zM66.4 206.0h0.9v0.9h-0.9zM64.4 191.7h1.4v1.4h-1.4zM85.5 187.2h0.7v0.7h-0.7zM53.6 238.6h0.7v0.7h-0.7zM73.4 181.0h1.1v1.1h-1.1zM99.7 266.7h1.8v1.8h-1.8zM125.4 184.8h1.4v1.4h-1.4zM30.6 165.4h0.7v0.7h-0.7zM73.7 262.5h0.7v0.7h-0.7zM43.4 272.2h1.8v1.8h-1.8zM98.7 225.8h1.1v1.1h-1.1zM28.4 180.8h0.9v0.9h-0.9zM101.4 216.0h1.4v1.4h-1.4zM98.9 168.5h1.1v1.1h-1.1zM125.7 260.3h0.9v0.9h-0.9zM86.0 240.2h1.1v1.1h-1.1zM25.0 186.2h0.7v0.7h-0.7zM127.7 194.3h1.1v1.1h-1.1zM91.0 187.0h1.8v1.8h-1.8zM50.3 202.7h1.4v1.4h-1.4zM40.3 194.9h1.1v1.1h-1.1zM40.0 188.0h1.1v1.1h-1.1zM73.2 251.8h0.7v0.7h-0.7zM101.0 230.7h0.7v0.7h-0.7zM55.6 170.5h1.4v1.4h-1.4zM65.1 170.2h1.1v1.1h-1.1zM124.7 200.6h1.1v1.1h-1.1zM120.1 245.4h0.7v0.7h-0.7zM104.6 186.3h1.8v1.8h-1.8zM68.7 229.8h1.4v1.4h-1.4zM26.0 166.4h0.7v0.7h-0.7zM122.1 209.5h1.8v1.8h-1.8zM45.6 192.3h0.7v0.7h-0.7zM48.8 164.1h0.9v0.9h-0.9zM30.2 226.3h1.4v1.4h-1.4zM65.3 169.9h0.9v0.9h-0.9zM28.9 195.0h1.1v1.1h-1.1zM63.7 272.0h1.1v1.1h-1.1zM50.8 164.9h1.1v1.1h-1.1zM94.1 217.3h1.1v1.1h-1.1zM81.6 175.1h1.8v1.8h-1.8zM72.2 163.2h0.7v0.7h-0.7zM125.6 190.8h1.8v1.8h-1.8zM92.9 206.8h0.7v0.7h-0.7zM40.0 192.6h1.1v1.1h-1.1zM55.6 172.0h1.1v1.1h-1.1zM22.2 210.5h1.4v1.4h-1.4zM95.4 228.9h0.7v0.7h-0.7zM22.0 200.1h1.8v1.8h-1.8zM69.3 187.2h0.7v0.7h-0.7zM109.3 237.4h0.7v0.7h-0.7zM19.7 264.5h1.4v1.4h-1.4zM45.6 172.6h1.1v1.1h-1.1zM128.5 221.0h0.7v0.7h-0.7zM21.0 220.4h0.7v0.7h-0.7zM111.8 239.3h0.9v0.9h-0.9zM20.7 174.3h1.4v1.4h-1.4zM47.5 208.5h0.9v0.9h-0.9zM20.0 217.8h1.4v1.4h-1.4zM36.0 171.4h0.7v0.7h-0.7z" fill="#9ae090" opacity="0.62"/><path d="M19.4 169.9h1.1v1.1h-1.1zM87.5 223.2h1.4v1.4h-1.4zM43.6 188.2h1.1v1.1h-1.1zM67.9 244.2h1.1v1.1h-1.1zM84.9 251.3h0.7v0.7h-0.7zM20.9 170.6h1.8v1.8h-1.8zM88.6 204.0h1.4v1.4h-1.4zM100.3 214.6h0.9v0.9h-0.9zM115.6 249.2h1.4v1.4h-1.4zM104.4 207.3h1.4v1.4h-1.4zM123.6 237.8h1.1v1.1h-1.1zM100.4 213.0h0.7v0.7h-0.7zM85.7 240.8h1.1v1.1h-1.1zM78.5 168.7h1.1v1.1h-1.1zM47.0 251.8h1.4v1.4h-1.4zM116.6 178.9h1.4v1.4h-1.4zM55.1 182.1h1.4v1.4h-1.4zM82.0 265.4h1.1v1.1h-1.1zM87.7 254.9h0.7v0.7h-0.7zM114.7 163.5h1.8v1.8h-1.8zM64.4 252.3h1.8v1.8h-1.8zM63.8 169.9h1.8v1.8h-1.8zM57.3 182.3h1.1v1.1h-1.1zM92.4 228.6h0.7v0.7h-0.7zM111.2 209.3h0.9v0.9h-0.9zM38.6 235.7h0.9v0.9h-0.9zM47.0 188.9h0.9v0.9h-0.9zM79.5 188.8h1.8v1.8h-1.8zM113.8 225.8h0.7v0.7h-0.7zM118.8 173.0h0.9v0.9h-0.9zM29.1 225.6h1.8v1.8h-1.8zM32.6 164.0h1.4v1.4h-1.4zM41.5 253.0h0.7v0.7h-0.7zM119.2 180.2h1.1v1.1h-1.1zM74.0 189.4h1.4v1.4h-1.4zM60.3 257.9h1.4v1.4h-1.4zM63.5 243.1h1.4v1.4h-1.4zM73.1 265.7h0.7v0.7h-0.7zM79.5 250.7h1.4v1.4h-1.4zM77.3 181.1h0.9v0.9h-0.9zM93.4 176.0h1.1v1.1h-1.1zM107.8 245.5h1.4v1.4h-1.4zM69.2 166.8h1.8v1.8h-1.8zM34.5 173.7h0.9v0.9h-0.9zM35.0 193.8h1.8v1.8h-1.8zM98.7 224.0h0.9v0.9h-0.9zM87.3 175.5h1.8v1.8h-1.8zM80.7 237.9h1.1v1.1h-1.1zM86.9 268.8h1.4v1.4h-1.4zM34.8 239.6h0.9v0.9h-0.9zM85.5 266.0h1.1v1.1h-1.1zM106.2 217.3h0.9v0.9h-0.9zM45.0 266.3h1.4v1.4h-1.4zM94.8 216.8h0.9v0.9h-0.9zM93.2 173.0h0.9v0.9h-0.9zM26.2 171.5h1.8v1.8h-1.8zM49.3 216.9h1.4v1.4h-1.4zM100.6 227.2h1.4v1.4h-1.4zM124.2 193.7h1.4v1.4h-1.4zM64.6 223.3h1.1v1.1h-1.1zM21.5 266.7h0.9v0.9h-0.9zM58.2 264.6h1.4v1.4h-1.4zM109.1 252.9h1.1v1.1h-1.1zM38.4 266.8h1.8v1.8h-1.8zM118.4 186.0h1.8v1.8h-1.8zM27.4 185.0h1.1v1.1h-1.1zM31.8 165.5h0.9v0.9h-0.9zM92.6 273.5h1.1v1.1h-1.1zM89.4 199.2h1.4v1.4h-1.4zM75.2 238.5h0.9v0.9h-0.9zM84.2 242.5h1.4v1.4h-1.4zM36.0 180.3h0.7v0.7h-0.7zM35.8 220.3h1.8v1.8h-1.8zM121.0 229.9h1.4v1.4h-1.4zM49.6 167.5h0.7v0.7h-0.7zM73.8 218.7h0.9v0.9h-0.9zM91.2 192.7h0.7v0.7h-0.7zM65.1 180.4h1.1v1.1h-1.1zM70.3 251.0h1.1v1.1h-1.1zM75.3 274.9h0.9v0.9h-0.9zM49.5 172.6h1.1v1.1h-1.1zM30.7 188.5h0.7v0.7h-0.7zM86.4 235.6h1.4v1.4h-1.4zM122.2 265.3h0.9v0.9h-0.9zM83.0 198.7h0.7v0.7h-0.7zM66.9 235.0h0.7v0.7h-0.7zM23.3 220.1h1.8v1.8h-1.8zM69.3 249.6h1.1v1.1h-1.1zM42.6 275.5h0.7v0.7h-0.7zM118.2 169.2h1.1v1.1h-1.1zM25.4 210.7h1.1v1.1h-1.1z" fill="#dcdc80" opacity="0.62"/><path d="M86.5 236.3h0.7v0.7h-0.7zM54.8 237.3h1.1v1.1h-1.1zM49.2 168.9h1.1v1.1h-1.1zM27.4 251.6h0.7v0.7h-0.7zM43.8 267.9h1.1v1.1h-1.1zM71.8 266.8h0.7v0.7h-0.7zM120.3 169.2h0.7v0.7h-0.7zM19.0 269.1h1.1v1.1h-1.1zM82.1 204.6h0.9v0.9h-0.9zM108.0 208.6h0.7v0.7h-0.7zM24.0 220.4h1.4v1.4h-1.4zM53.9 232.9h1.4v1.4h-1.4zM47.4 275.9h1.8v1.8h-1.8zM99.4 248.2h0.9v0.9h-0.9zM47.7 249.0h1.8v1.8h-1.8zM124.8 174.6h1.4v1.4h-1.4zM70.1 227.1h0.9v0.9h-0.9zM65.6 235.7h1.1v1.1h-1.1zM72.7 169.7h1.4v1.4h-1.4zM19.6 207.1h1.8v1.8h-1.8zM114.5 245.7h0.7v0.7h-0.7zM50.0 179.0h1.8v1.8h-1.8zM82.1 203.9h1.8v1.8h-1.8zM123.1 250.5h1.8v1.8h-1.8zM99.7 183.5h1.4v1.4h-1.4zM53.3 266.0h0.7v0.7h-0.7zM67.1 220.9h1.8v1.8h-1.8zM19.7 266.8h1.4v1.4h-1.4zM40.3 239.3h0.9v0.9h-0.9zM73.3 272.8h1.8v1.8h-1.8zM67.3 184.0h1.1v1.1h-1.1zM29.0 205.7h1.4v1.4h-1.4zM114.7 265.1h1.8v1.8h-1.8zM81.8 209.9h0.7v0.7h-0.7zM21.9 238.7h1.1v1.1h-1.1zM74.0 188.9h1.4v1.4h-1.4zM57.5 259.3h1.4v1.4h-1.4zM93.1 186.5h1.8v1.8h-1.8zM63.7 186.0h1.1v1.1h-1.1zM96.3 163.7h1.4v1.4h-1.4zM121.9 203.1h1.1v1.1h-1.1zM42.7 247.3h0.7v0.7h-0.7zM112.5 240.5h1.4v1.4h-1.4zM58.1 223.2h1.1v1.1h-1.1zM105.9 253.4h0.9v0.9h-0.9zM57.7 204.2h1.1v1.1h-1.1zM90.7 251.3h1.1v1.1h-1.1zM71.0 269.5h1.1v1.1h-1.1zM107.4 180.3h0.7v0.7h-0.7zM105.9 241.6h0.7v0.7h-0.7zM115.5 176.7h1.4v1.4h-1.4zM76.3 163.3h0.9v0.9h-0.9zM64.8 224.6h1.4v1.4h-1.4zM61.0 206.9h1.4v1.4h-1.4zM99.1 182.9h1.8v1.8h-1.8zM113.8 225.7h1.4v1.4h-1.4zM121.5 237.8h1.8v1.8h-1.8zM94.1 180.7h0.7v0.7h-0.7zM115.1 253.9h1.8v1.8h-1.8zM94.5 189.1h0.9v0.9h-0.9zM107.2 219.2h1.4v1.4h-1.4zM62.8 228.4h1.1v1.1h-1.1zM35.9 265.2h1.4v1.4h-1.4zM110.9 244.7h0.7v0.7h-0.7zM86.7 196.4h1.1v1.1h-1.1zM94.7 186.9h1.1v1.1h-1.1zM42.1 167.1h1.4v1.4h-1.4zM103.5 190.2h0.7v0.7h-0.7zM44.7 176.7h1.4v1.4h-1.4zM46.1 228.0h0.9v0.9h-0.9zM118.3 171.0h0.9v0.9h-0.9zM107.0 173.7h1.8v1.8h-1.8zM29.6 215.0h1.1v1.1h-1.1zM22.1 274.9h1.8v1.8h-1.8zM117.4 182.7h1.1v1.1h-1.1zM69.2 227.9h0.7v0.7h-0.7zM72.5 248.7h0.7v0.7h-0.7zM121.5 226.8h0.9v0.9h-0.9zM88.0 254.6h1.4v1.4h-1.4zM117.6 226.8h1.4v1.4h-1.4zM70.3 185.6h1.8v1.8h-1.8zM55.2 243.4h1.4v1.4h-1.4zM86.8 180.8h0.7v0.7h-0.7zM41.3 247.0h0.9v0.9h-0.9zM31.5 273.7h0.7v0.7h-0.7zM79.1 268.1h0.7v0.7h-0.7zM64.9 234.8h0.9v0.9h-0.9zM74.8 179.8h0.7v0.7h-0.7zM56.1 269.3h0.9v0.9h-0.9zM110.1 264.7h1.8v1.8h-1.8zM35.9 245.8h1.8v1.8h-1.8zM57.8 265.6h1.1v1.1h-1.1zM74.9 269.8h0.9v0.9h-0.9zM25.0 230.2h1.4v1.4h-1.4zM126.6 212.9h0.7v0.7h-0.7zM28.2 245.8h0.9v0.9h-0.9zM52.5 186.3h1.1v1.1h-1.1zM58.6 275.2h1.1v1.1h-1.1zM91.1 262.1h1.1v1.1h-1.1zM97.5 246.5h0.7v0.7h-0.7zM92.6 247.7h1.1v1.1h-1.1zM85.9 166.8h1.8v1.8h-1.8zM106.0 178.7h1.8v1.8h-1.8zM112.1 180.8h0.9v0.9h-0.9zM97.1 246.0h0.9v0.9h-0.9zM90.3 192.9h0.9v0.9h-0.9zM34.9 222.2h1.4v1.4h-1.4zM79.4 231.9h0.7v0.7h-0.7zM55.4 174.7h0.9v0.9h-0.9zM87.8 229.9h1.4v1.4h-1.4zM69.1 226.0h1.8v1.8h-1.8zM96.2 271.0h0.7v0.7h-0.7zM66.8 264.0h1.1v1.1h-1.1z" fill="#aa8cd8" opacity="0.62"/><path d="M117.6 218.4h0.7v0.7h-0.7zM23.4 268.7h0.9v0.9h-0.9zM33.5 184.9h0.7v0.7h-0.7zM108.4 178.1h1.4v1.4h-1.4zM73.3 243.9h1.4v1.4h-1.4zM99.9 185.7h0.9v0.9h-0.9zM108.9 209.6h1.1v1.1h-1.1zM81.6 268.7h1.8v1.8h-1.8zM34.2 195.3h1.8v1.8h-1.8zM38.3 187.9h1.4v1.4h-1.4zM44.1 250.0h1.4v1.4h-1.4zM25.3 203.0h1.1v1.1h-1.1zM59.3 185.7h1.4v1.4h-1.4zM77.0 209.3h0.9v0.9h-0.9zM51.6 211.8h1.8v1.8h-1.8zM126.2 246.1h0.7v0.7h-0.7zM63.5 271.1h0.9v0.9h-0.9zM56.5 180.4h1.4v1.4h-1.4zM64.5 272.5h0.7v0.7h-0.7zM41.6 239.0h1.4v1.4h-1.4zM48.6 227.9h1.4v1.4h-1.4zM61.2 198.6h1.8v1.8h-1.8zM46.2 167.3h0.9v0.9h-0.9zM69.9 267.0h0.7v0.7h-0.7zM116.7 246.3h1.1v1.1h-1.1zM125.4 188.5h0.9v0.9h-0.9zM94.8 248.1h0.7v0.7h-0.7zM109.1 275.9h1.4v1.4h-1.4zM106.0 190.7h0.9v0.9h-0.9zM69.8 253.6h0.9v0.9h-0.9zM129.0 208.7h0.7v0.7h-0.7zM97.1 167.6h0.7v0.7h-0.7zM30.3 198.2h0.7v0.7h-0.7zM116.9 170.1h0.7v0.7h-0.7zM69.1 241.2h1.8v1.8h-1.8zM67.5 227.8h1.1v1.1h-1.1zM120.3 229.5h0.7v0.7h-0.7zM86.2 245.6h1.1v1.1h-1.1zM51.1 276.4h0.9v0.9h-0.9zM23.1 251.2h1.4v1.4h-1.4zM92.8 180.4h1.4v1.4h-1.4zM55.1 222.1h0.7v0.7h-0.7zM38.0 268.2h1.8v1.8h-1.8zM56.0 255.4h1.4v1.4h-1.4zM21.6 252.9h0.9v0.9h-0.9zM28.3 244.8h1.1v1.1h-1.1zM100.7 257.9h1.8v1.8h-1.8zM117.2 185.9h0.7v0.7h-0.7zM83.2 273.7h1.1v1.1h-1.1zM110.6 244.1h1.1v1.1h-1.1zM61.6 254.9h1.1v1.1h-1.1zM128.1 197.9h0.7v0.7h-0.7zM81.3 245.0h1.4v1.4h-1.4zM102.0 174.8h0.7v0.7h-0.7zM112.3 212.1h0.7v0.7h-0.7zM54.0 173.8h1.4v1.4h-1.4zM25.1 176.9h1.4v1.4h-1.4zM105.5 191.7h1.1v1.1h-1.1zM76.1 175.7h0.9v0.9h-0.9zM37.5 217.9h0.7v0.7h-0.7zM103.0 197.3h1.1v1.1h-1.1zM55.0 268.7h1.1v1.1h-1.1zM108.7 236.4h0.7v0.7h-0.7zM58.7 270.4h1.4v1.4h-1.4zM54.3 276.0h1.8v1.8h-1.8zM85.1 206.1h1.8v1.8h-1.8zM28.3 163.6h1.1v1.1h-1.1zM75.4 183.0h1.8v1.8h-1.8zM83.5 240.2h1.1v1.1h-1.1zM48.6 200.9h1.4v1.4h-1.4zM126.4 167.3h0.7v0.7h-0.7zM46.1 189.5h0.7v0.7h-0.7zM98.9 209.6h1.4v1.4h-1.4zM82.6 273.2h1.4v1.4h-1.4zM71.4 269.0h0.9v0.9h-0.9zM56.9 244.0h1.8v1.8h-1.8zM127.6 190.2h0.7v0.7h-0.7zM82.7 245.4h1.1v1.1h-1.1zM95.2 204.8h1.1v1.1h-1.1zM50.0 180.7h0.9v0.9h-0.9zM54.5 259.3h1.1v1.1h-1.1zM78.1 170.7h0.9v0.9h-0.9zM46.7 236.5h0.9v0.9h-0.9zM101.6 204.5h1.4v1.4h-1.4zM35.3 250.1h1.4v1.4h-1.4zM22.8 196.7h1.8v1.8h-1.8zM20.8 245.5h1.1v1.1h-1.1zM93.8 171.7h1.8v1.8h-1.8zM70.8 198.6h1.1v1.1h-1.1zM48.6 191.7h1.8v1.8h-1.8zM28.9 195.1h1.4v1.4h-1.4zM67.1 173.6h1.4v1.4h-1.4z" fill="#80acE0" opacity="0.62"/><path d="M69.6 216.2h0.7v0.7h-0.7zM101.3 258.7h0.7v0.7h-0.7zM108.1 234.9h1.8v1.8h-1.8zM31.3 236.3h0.7v0.7h-0.7zM81.7 204.1h1.8v1.8h-1.8zM29.0 197.2h1.8v1.8h-1.8zM96.2 198.0h0.7v0.7h-0.7zM40.8 273.6h1.1v1.1h-1.1zM128.7 269.2h1.1v1.1h-1.1zM27.0 210.9h0.7v0.7h-0.7zM58.2 252.2h0.7v0.7h-0.7zM45.2 180.5h1.8v1.8h-1.8zM31.2 184.6h1.8v1.8h-1.8zM88.8 243.9h1.1v1.1h-1.1zM22.2 201.8h0.7v0.7h-0.7zM64.2 261.5h1.1v1.1h-1.1zM120.7 175.4h1.4v1.4h-1.4zM60.6 177.0h0.9v0.9h-0.9zM46.2 272.9h1.4v1.4h-1.4zM24.5 251.8h0.7v0.7h-0.7zM64.9 236.6h1.1v1.1h-1.1zM32.0 215.7h0.9v0.9h-0.9zM22.2 224.9h0.9v0.9h-0.9zM69.3 181.8h0.7v0.7h-0.7zM88.3 164.7h0.7v0.7h-0.7zM85.4 240.3h1.4v1.4h-1.4zM70.9 230.2h0.9v0.9h-0.9zM75.7 165.3h0.7v0.7h-0.7zM127.9 261.7h1.4v1.4h-1.4zM24.2 179.5h0.7v0.7h-0.7zM38.6 212.6h1.4v1.4h-1.4zM79.8 219.0h1.1v1.1h-1.1zM76.2 256.0h0.9v0.9h-0.9zM93.6 167.2h1.1v1.1h-1.1zM94.6 164.4h1.4v1.4h-1.4zM22.8 265.1h1.1v1.1h-1.1zM67.2 227.2h1.1v1.1h-1.1zM114.0 223.5h0.7v0.7h-0.7zM42.6 258.5h0.7v0.7h-0.7zM44.3 205.4h0.7v0.7h-0.7zM119.6 265.9h0.7v0.7h-0.7zM87.3 176.9h1.8v1.8h-1.8zM93.8 231.1h1.4v1.4h-1.4zM126.7 166.8h0.9v0.9h-0.9zM95.0 246.2h0.9v0.9h-0.9zM28.1 235.5h0.7v0.7h-0.7zM60.8 229.0h1.8v1.8h-1.8zM63.1 246.0h0.9v0.9h-0.9zM73.3 239.8h1.1v1.1h-1.1zM52.4 192.4h1.8v1.8h-1.8zM42.8 225.2h0.7v0.7h-0.7zM19.7 270.5h1.4v1.4h-1.4zM34.8 202.3h0.9v0.9h-0.9zM73.5 272.0h1.8v1.8h-1.8zM123.8 264.6h0.9v0.9h-0.9zM48.2 264.6h1.4v1.4h-1.4zM106.1 216.9h0.7v0.7h-0.7zM92.3 265.8h0.9v0.9h-0.9zM76.9 189.3h1.8v1.8h-1.8zM76.6 191.6h1.4v1.4h-1.4zM68.7 239.5h1.8v1.8h-1.8zM20.7 257.6h1.4v1.4h-1.4zM34.4 232.1h1.1v1.1h-1.1zM18.8 171.5h0.7v0.7h-0.7zM75.7 214.9h1.4v1.4h-1.4zM75.9 221.2h1.1v1.1h-1.1zM111.2 197.7h1.1v1.1h-1.1zM59.5 260.3h1.4v1.4h-1.4zM87.0 187.7h1.4v1.4h-1.4zM95.8 169.5h1.4v1.4h-1.4zM61.7 176.4h1.1v1.1h-1.1zM20.7 172.4h0.7v0.7h-0.7zM33.3 185.0h1.8v1.8h-1.8zM41.5 244.8h1.4v1.4h-1.4zM61.6 186.0h0.9v0.9h-0.9zM52.8 246.1h1.1v1.1h-1.1zM71.7 210.5h0.9v0.9h-0.9zM60.2 243.9h1.4v1.4h-1.4zM114.4 204.2h0.7v0.7h-0.7zM122.3 206.0h0.7v0.7h-0.7zM53.1 205.9h1.1v1.1h-1.1zM27.6 260.1h0.7v0.7h-0.7zM64.7 186.9h0.7v0.7h-0.7zM95.9 238.5h0.7v0.7h-0.7zM35.3 171.0h1.8v1.8h-1.8zM125.6 236.4h1.8v1.8h-1.8zM93.0 219.7h1.4v1.4h-1.4zM92.5 197.3h0.7v0.7h-0.7zM95.6 215.9h1.4v1.4h-1.4zM108.5 212.8h1.4v1.4h-1.4zM48.8 174.4h1.8v1.8h-1.8zM111.1 262.2h0.7v0.7h-0.7zM48.5 257.4h1.4v1.4h-1.4zM19.5 234.5h0.9v0.9h-0.9zM113.8 174.4h0.7v0.7h-0.7zM122.7 192.3h1.8v1.8h-1.8zM100.5 240.2h0.9v0.9h-0.9zM33.1 219.2h1.1v1.1h-1.1zM53.9 232.2h1.4v1.4h-1.4zM74.3 179.3h0.7v0.7h-0.7zM95.1 165.3h0.7v0.7h-0.7zM41.8 200.1h1.1v1.1h-1.1z" fill="#e49090" opacity="0.62"/><path d="M111.9 189.8h0.9v0.9h-0.9zM73.6 255.5h1.8v1.8h-1.8zM125.9 191.3h0.7v0.7h-0.7zM46.6 239.1h1.1v1.1h-1.1zM123.7 219.5h0.9v0.9h-0.9zM99.8 217.1h1.4v1.4h-1.4zM44.0 210.5h1.8v1.8h-1.8zM54.2 208.2h0.9v0.9h-0.9zM119.5 167.6h1.1v1.1h-1.1zM118.4 233.7h0.9v0.9h-0.9zM124.2 267.4h0.9v0.9h-0.9zM58.0 250.2h1.4v1.4h-1.4zM115.7 164.7h1.1v1.1h-1.1zM39.3 207.3h1.8v1.8h-1.8zM82.2 181.1h0.9v0.9h-0.9zM66.7 251.2h1.8v1.8h-1.8zM111.9 239.1h1.8v1.8h-1.8zM84.7 198.2h1.4v1.4h-1.4zM59.8 241.1h1.8v1.8h-1.8zM38.3 259.9h1.1v1.1h-1.1zM30.8 204.7h1.1v1.1h-1.1zM66.0 192.8h0.9v0.9h-0.9zM48.7 183.6h0.9v0.9h-0.9zM76.9 224.3h0.7v0.7h-0.7zM30.2 176.9h0.9v0.9h-0.9zM75.4 272.2h1.1v1.1h-1.1zM45.8 222.3h1.4v1.4h-1.4zM111.2 232.5h1.8v1.8h-1.8zM108.9 166.5h1.1v1.1h-1.1zM110.6 203.4h0.7v0.7h-0.7zM109.2 200.6h1.8v1.8h-1.8zM123.2 240.1h1.8v1.8h-1.8zM94.0 229.0h0.9v0.9h-0.9zM45.0 207.4h1.8v1.8h-1.8zM61.3 172.8h0.9v0.9h-0.9zM39.4 244.9h0.7v0.7h-0.7zM117.6 165.9h1.4v1.4h-1.4zM50.4 193.9h1.8v1.8h-1.8zM100.0 226.0h0.9v0.9h-0.9zM115.1 229.7h0.7v0.7h-0.7zM95.1 207.9h1.8v1.8h-1.8zM33.2 243.6h1.4v1.4h-1.4zM116.2 179.2h1.8v1.8h-1.8zM76.9 191.7h1.4v1.4h-1.4zM113.9 236.9h0.9v0.9h-0.9zM91.0 231.6h1.1v1.1h-1.1zM46.0 192.9h1.4v1.4h-1.4zM76.2 223.1h1.1v1.1h-1.1zM18.7 177.9h1.4v1.4h-1.4zM89.9 255.4h1.1v1.1h-1.1zM62.1 178.4h0.7v0.7h-0.7zM22.6 258.3h1.1v1.1h-1.1zM37.1 202.9h1.4v1.4h-1.4zM62.8 186.2h0.9v0.9h-0.9zM27.4 229.0h0.9v0.9h-0.9zM84.1 252.4h0.7v0.7h-0.7zM125.5 252.8h1.1v1.1h-1.1zM44.7 230.0h1.8v1.8h-1.8zM38.8 264.4h1.4v1.4h-1.4zM37.3 230.2h1.1v1.1h-1.1zM57.3 270.2h1.1v1.1h-1.1zM118.9 231.3h0.7v0.7h-0.7zM22.2 168.5h0.9v0.9h-0.9zM41.5 169.1h1.8v1.8h-1.8zM53.8 186.5h1.4v1.4h-1.4zM49.7 206.4h0.7v0.7h-0.7zM23.6 238.7h1.1v1.1h-1.1zM62.9 218.3h0.9v0.9h-0.9zM24.6 212.2h0.7v0.7h-0.7zM89.4 241.3h0.7v0.7h-0.7zM113.2 204.9h0.9v0.9h-0.9zM52.4 252.4h1.1v1.1h-1.1zM38.1 241.9h1.1v1.1h-1.1zM39.2 243.7h1.4v1.4h-1.4zM27.9 168.6h1.8v1.8h-1.8zM71.7 191.8h1.8v1.8h-1.8zM91.2 169.4h0.7v0.7h-0.7zM117.8 271.5h1.1v1.1h-1.1zM101.9 250.7h1.8v1.8h-1.8zM60.3 258.7h0.9v0.9h-0.9zM116.4 265.9h0.7v0.7h-0.7zM42.7 247.9h0.7v0.7h-0.7zM84.8 192.5h1.1v1.1h-1.1zM101.1 190.0h1.1v1.1h-1.1zM63.3 245.3h0.9v0.9h-0.9zM19.5 186.1h0.9v0.9h-0.9zM98.7 189.9h0.9v0.9h-0.9zM120.8 163.7h1.1v1.1h-1.1zM65.7 217.3h0.7v0.7h-0.7zM55.2 193.3h1.1v1.1h-1.1zM30.5 199.7h0.7v0.7h-0.7zM59.5 221.2h1.8v1.8h-1.8zM27.6 204.1h0.9v0.9h-0.9zM97.1 203.2h0.7v0.7h-0.7zM87.3 184.5h0.7v0.7h-0.7zM50.6 185.8h0.9v0.9h-0.9zM118.2 176.2h1.4v1.4h-1.4zM90.6 211.2h1.1v1.1h-1.1zM64.3 272.1h1.1v1.1h-1.1zM48.4 197.3h0.9v0.9h-0.9zM110.2 241.5h1.8v1.8h-1.8zM122.3 188.1h1.1v1.1h-1.1zM32.8 197.8h0.7v0.7h-0.7zM70.4 220.8h0.9v0.9h-0.9zM42.2 252.0h1.1v1.1h-1.1zM91.4 226.8h1.4v1.4h-1.4zM60.4 245.1h1.8v1.8h-1.8zM128.2 216.1h0.7v0.7h-0.7zM124.6 189.0h1.1v1.1h-1.1zM94.4 183.0h0.7v0.7h-0.7zM92.2 163.3h1.4v1.4h-1.4zM53.6 262.9h0.7v0.7h-0.7zM21.4 236.9h1.1v1.1h-1.1zM86.2 179.2h0.7v0.7h-0.7zM116.5 180.5h1.1v1.1h-1.1zM33.0 261.0h0.9v0.9h-0.9zM118.9 208.7h0.9v0.9h-0.9zM31.0 208.2h0.9v0.9h-0.9z" fill="#8acce8" opacity="0.62"/><path d="M82.5 179.2h1.8v1.8h-1.8zM123.8 178.1h1.8v1.8h-1.8zM97.1 265.8h1.1v1.1h-1.1zM70.4 202.2h1.1v1.1h-1.1zM48.0 248.7h1.4v1.4h-1.4zM19.2 197.4h1.4v1.4h-1.4zM67.1 175.4h0.7v0.7h-0.7zM21.9 170.1h0.7v0.7h-0.7zM47.1 244.7h1.1v1.1h-1.1zM50.6 227.6h1.1v1.1h-1.1zM47.5 226.1h1.4v1.4h-1.4zM83.8 272.1h1.8v1.8h-1.8zM35.9 200.4h0.9v0.9h-0.9zM48.4 175.5h0.7v0.7h-0.7zM44.9 208.6h0.9v0.9h-0.9zM114.8 178.8h1.1v1.1h-1.1zM35.3 231.1h1.1v1.1h-1.1zM120.4 243.5h0.7v0.7h-0.7zM128.1 188.3h0.7v0.7h-0.7zM28.7 242.7h0.9v0.9h-0.9zM114.5 244.7h0.7v0.7h-0.7zM31.7 219.3h1.8v1.8h-1.8zM114.1 233.8h1.8v1.8h-1.8zM89.9 176.7h1.8v1.8h-1.8zM55.4 203.2h0.9v0.9h-0.9zM109.2 222.0h1.4v1.4h-1.4zM92.2 185.4h1.4v1.4h-1.4zM44.8 177.8h0.9v0.9h-0.9zM72.3 184.6h1.8v1.8h-1.8zM37.4 181.7h0.9v0.9h-0.9zM18.9 267.8h1.1v1.1h-1.1zM43.6 178.5h1.1v1.1h-1.1zM100.7 201.9h0.7v0.7h-0.7zM21.8 266.8h0.9v0.9h-0.9zM115.0 239.3h0.9v0.9h-0.9zM88.0 245.9h0.9v0.9h-0.9zM83.1 179.4h1.1v1.1h-1.1zM104.1 275.6h1.4v1.4h-1.4zM80.1 204.2h1.8v1.8h-1.8zM43.7 186.2h1.4v1.4h-1.4zM48.3 183.2h1.1v1.1h-1.1zM63.3 226.5h1.1v1.1h-1.1zM117.7 235.4h0.9v0.9h-0.9zM57.4 170.3h1.8v1.8h-1.8zM87.8 224.9h0.9v0.9h-0.9zM87.1 222.7h1.4v1.4h-1.4zM20.0 185.9h1.8v1.8h-1.8zM24.4 183.3h1.8v1.8h-1.8zM51.8 261.8h1.4v1.4h-1.4zM86.7 196.3h0.7v0.7h-0.7zM26.4 234.1h1.4v1.4h-1.4zM76.8 195.9h0.7v0.7h-0.7zM32.6 243.3h1.4v1.4h-1.4zM97.0 251.0h1.8v1.8h-1.8zM42.8 182.7h1.8v1.8h-1.8zM66.7 185.5h0.9v0.9h-0.9zM57.3 210.6h1.8v1.8h-1.8zM57.3 237.8h0.9v0.9h-0.9zM89.9 187.9h0.7v0.7h-0.7zM98.2 236.9h1.8v1.8h-1.8zM120.2 214.3h0.7v0.7h-0.7zM28.8 275.0h1.4v1.4h-1.4zM31.3 275.2h1.4v1.4h-1.4zM80.4 244.1h0.9v0.9h-0.9zM32.2 188.4h0.9v0.9h-0.9zM53.5 210.6h1.4v1.4h-1.4zM47.5 170.2h0.7v0.7h-0.7zM30.0 235.3h0.9v0.9h-0.9zM118.1 186.3h1.1v1.1h-1.1zM101.2 244.2h0.9v0.9h-0.9zM103.3 230.5h1.4v1.4h-1.4zM88.9 217.4h1.1v1.1h-1.1zM52.5 188.0h1.4v1.4h-1.4zM35.6 260.8h1.4v1.4h-1.4zM88.7 205.9h0.9v0.9h-0.9zM89.6 249.4h0.9v0.9h-0.9zM71.4 223.4h0.9v0.9h-0.9zM47.6 274.1h0.7v0.7h-0.7zM36.7 239.3h1.4v1.4h-1.4zM78.4 196.4h0.7v0.7h-0.7zM78.9 207.1h0.7v0.7h-0.7zM112.1 231.6h1.8v1.8h-1.8zM57.2 255.6h0.7v0.7h-0.7zM66.5 163.2h1.1v1.1h-1.1zM50.1 273.5h1.4v1.4h-1.4zM68.7 200.1h1.8v1.8h-1.8zM97.9 205.6h1.4v1.4h-1.4zM22.2 192.0h1.1v1.1h-1.1zM82.4 164.4h1.4v1.4h-1.4zM85.2 211.0h1.8v1.8h-1.8z" fill="#c890d8" opacity="0.62"/><path d="M94.8 240.0h1.1v1.1h-1.1zM101.0 259.6h0.7v0.7h-0.7zM31.1 231.3h1.8v1.8h-1.8zM39.5 274.9h1.4v1.4h-1.4zM37.6 247.8h0.7v0.7h-0.7zM20.5 163.3h1.1v1.1h-1.1zM66.5 245.6h1.8v1.8h-1.8zM123.4 266.9h0.7v0.7h-0.7zM71.0 178.1h0.9v0.9h-0.9zM103.4 231.6h1.4v1.4h-1.4zM62.3 253.2h0.9v0.9h-0.9zM85.7 241.4h0.7v0.7h-0.7zM104.4 226.2h0.9v0.9h-0.9zM106.5 185.8h0.9v0.9h-0.9zM45.4 165.9h1.8v1.8h-1.8zM67.2 253.0h1.8v1.8h-1.8zM40.9 232.8h0.9v0.9h-0.9zM82.1 194.2h0.7v0.7h-0.7zM60.1 214.6h1.4v1.4h-1.4zM20.8 192.2h1.4v1.4h-1.4zM58.3 204.8h0.7v0.7h-0.7zM18.7 261.8h1.4v1.4h-1.4zM80.4 204.2h1.8v1.8h-1.8zM50.0 256.1h1.4v1.4h-1.4zM54.0 216.4h1.1v1.1h-1.1zM123.8 217.8h0.9v0.9h-0.9zM106.9 184.1h1.8v1.8h-1.8zM42.2 208.6h0.9v0.9h-0.9zM19.2 241.4h1.4v1.4h-1.4zM58.5 238.6h1.8v1.8h-1.8zM68.3 173.0h1.4v1.4h-1.4zM100.2 208.8h0.7v0.7h-0.7zM74.7 210.9h0.7v0.7h-0.7zM21.9 188.0h1.4v1.4h-1.4zM126.1 200.3h0.9v0.9h-0.9zM40.3 216.6h0.9v0.9h-0.9zM54.6 204.5h0.7v0.7h-0.7zM111.5 262.6h1.4v1.4h-1.4zM74.3 204.8h0.9v0.9h-0.9zM41.9 251.1h0.9v0.9h-0.9zM66.3 257.1h1.8v1.8h-1.8zM116.8 232.6h1.4v1.4h-1.4zM67.9 164.3h1.8v1.8h-1.8zM117.7 265.5h1.4v1.4h-1.4zM96.4 238.4h1.8v1.8h-1.8zM28.0 194.2h1.1v1.1h-1.1zM90.8 231.2h1.4v1.4h-1.4zM118.4 181.0h1.8v1.8h-1.8zM21.4 245.6h0.9v0.9h-0.9zM25.0 241.0h0.7v0.7h-0.7zM40.0 215.7h1.4v1.4h-1.4zM65.7 173.5h1.8v1.8h-1.8zM79.0 208.9h0.9v0.9h-0.9zM90.0 174.1h1.4v1.4h-1.4zM69.6 216.5h0.7v0.7h-0.7zM42.5 266.3h1.8v1.8h-1.8zM58.0 231.9h1.1v1.1h-1.1zM92.4 219.5h1.4v1.4h-1.4zM35.0 262.6h0.7v0.7h-0.7zM58.0 166.7h1.8v1.8h-1.8zM59.9 167.3h1.8v1.8h-1.8zM102.2 248.3h0.7v0.7h-0.7zM74.7 219.3h1.1v1.1h-1.1zM87.3 176.8h0.9v0.9h-0.9zM108.0 246.5h0.9v0.9h-0.9zM48.6 235.5h1.4v1.4h-1.4zM29.6 255.0h0.9v0.9h-0.9zM47.2 183.8h0.7v0.7h-0.7zM55.4 177.6h0.7v0.7h-0.7zM30.8 246.3h0.7v0.7h-0.7zM50.1 228.5h0.7v0.7h-0.7zM55.8 205.0h1.1v1.1h-1.1zM69.3 244.3h0.7v0.7h-0.7zM94.1 185.3h1.8v1.8h-1.8zM97.6 188.5h1.1v1.1h-1.1zM57.0 216.4h0.7v0.7h-0.7zM107.2 182.9h1.8v1.8h-1.8zM54.6 180.8h0.9v0.9h-0.9z" fill="#90d8a8" opacity="0.62"/><path d="M53.1 258.8h0.7v0.7h-0.7zM45.7 193.3h1.8v1.8h-1.8zM52.6 245.7h1.1v1.1h-1.1zM39.6 170.2h1.8v1.8h-1.8zM90.1 217.9h1.8v1.8h-1.8zM22.6 227.1h0.7v0.7h-0.7zM83.7 233.2h0.9v0.9h-0.9zM109.0 191.9h1.8v1.8h-1.8zM47.0 236.4h0.7v0.7h-0.7zM111.4 186.1h0.9v0.9h-0.9zM46.5 195.2h1.1v1.1h-1.1zM105.5 242.5h0.7v0.7h-0.7zM75.5 238.4h0.9v0.9h-0.9zM89.0 257.5h1.8v1.8h-1.8zM41.7 210.4h0.9v0.9h-0.9zM126.2 237.6h0.7v0.7h-0.7zM113.7 184.1h0.7v0.7h-0.7zM60.8 252.6h1.1v1.1h-1.1zM50.5 169.9h1.8v1.8h-1.8zM107.6 195.3h0.7v0.7h-0.7zM43.8 229.1h1.1v1.1h-1.1zM61.9 270.3h1.1v1.1h-1.1zM62.5 258.6h1.4v1.4h-1.4zM108.5 259.6h0.7v0.7h-0.7zM19.3 203.2h0.9v0.9h-0.9zM66.9 234.2h1.8v1.8h-1.8zM74.9 175.6h1.1v1.1h-1.1zM35.7 229.9h0.9v0.9h-0.9zM128.1 248.6h0.7v0.7h-0.7zM124.2 218.7h1.8v1.8h-1.8zM105.1 257.7h1.8v1.8h-1.8zM60.1 236.8h1.1v1.1h-1.1zM124.8 233.7h0.7v0.7h-0.7zM26.8 255.3h1.8v1.8h-1.8zM89.0 268.2h0.9v0.9h-0.9zM113.8 253.8h0.7v0.7h-0.7zM122.4 262.6h0.7v0.7h-0.7zM71.9 264.6h0.9v0.9h-0.9zM64.0 236.2h1.4v1.4h-1.4zM118.8 168.6h1.8v1.8h-1.8zM125.8 163.1h1.4v1.4h-1.4zM89.1 257.3h0.7v0.7h-0.7zM128.8 256.1h0.9v0.9h-0.9zM120.1 226.4h0.7v0.7h-0.7zM18.9 170.7h1.8v1.8h-1.8zM69.6 246.0h1.4v1.4h-1.4zM63.6 197.1h0.9v0.9h-0.9zM109.3 184.0h1.1v1.1h-1.1zM124.9 243.9h1.1v1.1h-1.1zM20.6 222.0h0.7v0.7h-0.7zM42.9 234.8h1.1v1.1h-1.1zM79.9 234.5h1.8v1.8h-1.8zM104.3 216.7h0.7v0.7h-0.7zM33.9 223.3h1.8v1.8h-1.8zM126.9 237.6h1.4v1.4h-1.4zM55.8 225.0h1.1v1.1h-1.1zM18.2 250.9h0.9v0.9h-0.9zM127.8 263.1h1.4v1.4h-1.4zM29.8 186.8h1.1v1.1h-1.1zM47.5 213.6h0.9v0.9h-0.9zM105.1 178.0h1.4v1.4h-1.4zM119.1 276.8h0.9v0.9h-0.9zM89.7 216.5h1.4v1.4h-1.4zM82.0 203.5h1.4v1.4h-1.4zM32.6 262.0h1.1v1.1h-1.1zM32.6 170.1h1.4v1.4h-1.4zM53.0 245.2h0.7v0.7h-0.7zM36.8 182.8h1.4v1.4h-1.4zM119.6 219.0h1.8v1.8h-1.8zM108.4 242.3h1.8v1.8h-1.8zM101.8 255.7h1.1v1.1h-1.1zM106.1 259.1h1.4v1.4h-1.4zM70.2 215.6h0.9v0.9h-0.9zM58.1 170.3h0.7v0.7h-0.7zM53.5 182.6h0.9v0.9h-0.9zM87.5 240.3h1.4v1.4h-1.4zM30.8 265.3h0.7v0.7h-0.7zM75.9 165.3h1.8v1.8h-1.8zM105.9 252.8h0.7v0.7h-0.7zM53.3 249.4h1.1v1.1h-1.1zM41.6 210.5h1.4v1.4h-1.4zM35.8 241.0h1.8v1.8h-1.8zM29.0 219.7h1.8v1.8h-1.8zM29.3 269.3h1.1v1.1h-1.1zM95.0 194.1h0.7v0.7h-0.7zM59.8 229.0h0.9v0.9h-0.9zM128.5 186.8h0.7v0.7h-0.7zM38.9 271.2h1.8v1.8h-1.8zM120.3 255.6h1.8v1.8h-1.8zM87.8 231.8h0.7v0.7h-0.7zM99.3 258.4h1.8v1.8h-1.8zM110.7 240.7h0.7v0.7h-0.7zM117.7 183.7h1.4v1.4h-1.4zM126.5 177.8h0.9v0.9h-0.9zM104.4 250.4h1.1v1.1h-1.1z" fill="#ec9ccc" opacity="0.62"/><path d="M56.0 173.4h0.9v0.9h-0.9zM72.7 242.3h1.4v1.4h-1.4zM27.7 243.4h0.9v0.9h-0.9zM78.1 213.9h1.1v1.1h-1.1zM46.0 224.1h1.4v1.4h-1.4zM50.3 234.3h1.4v1.4h-1.4zM82.8 230.2h0.9v0.9h-0.9zM108.1 273.3h0.7v0.7h-0.7zM30.4 233.9h0.9v0.9h-0.9zM99.8 170.5h1.8v1.8h-1.8zM53.4 211.3h0.7v0.7h-0.7zM98.3 274.1h1.1v1.1h-1.1zM61.6 249.9h0.7v0.7h-0.7zM24.8 171.6h1.4v1.4h-1.4zM18.3 245.3h1.1v1.1h-1.1zM109.9 266.3h0.9v0.9h-0.9zM55.0 275.2h1.8v1.8h-1.8zM104.0 267.2h0.7v0.7h-0.7zM93.1 179.5h0.7v0.7h-0.7zM39.3 183.6h1.1v1.1h-1.1zM45.3 268.2h1.4v1.4h-1.4zM60.0 166.1h0.7v0.7h-0.7zM102.1 175.0h1.1v1.1h-1.1zM121.0 188.1h1.8v1.8h-1.8zM110.7 176.6h0.9v0.9h-0.9zM111.4 267.5h1.8v1.8h-1.8zM114.8 193.4h0.9v0.9h-0.9zM76.0 243.1h0.7v0.7h-0.7zM114.6 238.6h0.7v0.7h-0.7zM123.5 195.8h1.1v1.1h-1.1zM113.4 271.0h0.7v0.7h-0.7zM122.0 183.1h1.1v1.1h-1.1zM45.7 169.8h1.1v1.1h-1.1zM104.0 258.7h1.1v1.1h-1.1zM119.8 262.3h0.9v0.9h-0.9zM31.6 205.5h1.8v1.8h-1.8zM98.1 168.0h1.8v1.8h-1.8zM83.4 168.0h0.9v0.9h-0.9zM60.7 170.2h1.1v1.1h-1.1zM103.9 235.2h0.7v0.7h-0.7zM93.6 197.7h1.1v1.1h-1.1zM73.9 264.9h0.9v0.9h-0.9zM51.8 203.3h1.4v1.4h-1.4zM79.6 183.7h1.8v1.8h-1.8zM91.3 164.8h1.4v1.4h-1.4zM82.3 263.6h0.9v0.9h-0.9zM88.3 225.2h0.7v0.7h-0.7zM111.2 272.1h0.7v0.7h-0.7zM81.3 276.9h0.7v0.7h-0.7zM32.2 272.3h1.1v1.1h-1.1zM120.2 244.8h1.4v1.4h-1.4zM126.5 260.1h1.8v1.8h-1.8zM51.9 178.0h0.9v0.9h-0.9zM21.6 231.3h0.7v0.7h-0.7zM63.8 242.4h1.4v1.4h-1.4zM26.5 245.9h0.9v0.9h-0.9zM124.3 204.3h0.9v0.9h-0.9zM36.0 228.6h0.7v0.7h-0.7zM57.9 227.9h0.7v0.7h-0.7zM43.1 261.9h0.7v0.7h-0.7zM103.8 202.1h0.9v0.9h-0.9zM127.1 232.8h0.7v0.7h-0.7zM109.6 198.8h1.1v1.1h-1.1zM25.2 164.7h0.9v0.9h-0.9zM58.4 245.4h0.9v0.9h-0.9zM90.0 264.1h1.4v1.4h-1.4zM103.8 238.7h0.9v0.9h-0.9zM37.7 210.1h0.7v0.7h-0.7zM67.5 220.0h1.8v1.8h-1.8zM62.5 178.3h0.9v0.9h-0.9zM99.6 204.0h1.4v1.4h-1.4zM88.4 243.4h0.9v0.9h-0.9zM34.5 201.2h1.8v1.8h-1.8zM21.4 199.5h1.8v1.8h-1.8zM67.9 260.2h1.4v1.4h-1.4zM112.2 256.4h1.1v1.1h-1.1zM77.8 201.4h0.7v0.7h-0.7zM53.4 202.3h1.1v1.1h-1.1zM22.6 252.4h1.4v1.4h-1.4zM107.5 213.3h1.1v1.1h-1.1zM69.4 175.2h0.9v0.9h-0.9zM41.8 237.6h1.1v1.1h-1.1zM84.8 261.6h0.9v0.9h-0.9zM70.1 269.4h1.8v1.8h-1.8zM31.8 195.4h1.1v1.1h-1.1zM63.3 224.1h1.1v1.1h-1.1zM77.0 194.4h1.4v1.4h-1.4zM113.7 243.9h1.4v1.4h-1.4zM127.1 212.3h1.1v1.1h-1.1zM61.3 206.2h0.7v0.7h-0.7zM66.0 220.9h1.1v1.1h-1.1zM113.6 186.9h1.4v1.4h-1.4zM74.6 220.1h0.7v0.7h-0.7zM122.3 182.6h1.1v1.1h-1.1zM66.9 250.0h1.1v1.1h-1.1zM26.8 261.4h0.9v0.9h-0.9zM45.3 195.7h0.7v0.7h-0.7z" fill="#bcbcbc" opacity="0.62"/><path d="M100.1 274.2h1.4v1.4h-1.4zM18.4 219.1h1.4v1.4h-1.4zM51.5 179.0h1.1v1.1h-1.1zM100.0 274.3h1.1v1.1h-1.1zM90.8 197.3h1.8v1.8h-1.8zM60.5 248.0h0.9v0.9h-0.9zM28.3 265.2h1.4v1.4h-1.4zM64.1 243.9h0.9v0.9h-0.9zM108.1 250.4h0.7v0.7h-0.7zM78.8 170.2h0.7v0.7h-0.7zM118.1 211.3h0.7v0.7h-0.7zM88.7 194.7h1.1v1.1h-1.1zM28.6 235.8h1.1v1.1h-1.1zM69.4 179.2h1.8v1.8h-1.8zM88.8 191.8h1.4v1.4h-1.4zM82.4 175.5h1.1v1.1h-1.1zM122.3 223.1h0.9v0.9h-0.9zM57.4 260.0h1.1v1.1h-1.1zM109.8 196.4h1.4v1.4h-1.4zM105.0 167.6h1.8v1.8h-1.8zM105.6 266.7h1.8v1.8h-1.8zM120.8 229.8h0.7v0.7h-0.7zM114.6 215.2h0.7v0.7h-0.7zM53.4 189.6h0.7v0.7h-0.7zM46.5 177.2h1.4v1.4h-1.4zM31.4 244.5h1.1v1.1h-1.1zM100.9 181.7h0.7v0.7h-0.7zM39.0 225.2h1.8v1.8h-1.8zM85.3 202.7h0.7v0.7h-0.7zM98.3 196.4h1.4v1.4h-1.4zM90.0 163.8h1.4v1.4h-1.4zM75.4 222.0h1.4v1.4h-1.4zM115.7 272.9h1.4v1.4h-1.4zM57.8 184.3h1.1v1.1h-1.1zM80.3 176.1h1.8v1.8h-1.8zM109.7 203.0h0.9v0.9h-0.9zM58.8 187.7h1.4v1.4h-1.4zM83.2 205.0h0.9v0.9h-0.9zM65.8 249.3h0.9v0.9h-0.9zM44.6 167.7h1.8v1.8h-1.8zM65.5 224.0h0.9v0.9h-0.9zM58.0 190.4h1.4v1.4h-1.4zM33.2 251.5h0.7v0.7h-0.7zM38.2 256.3h1.8v1.8h-1.8zM111.6 273.3h1.4v1.4h-1.4zM98.7 200.8h1.4v1.4h-1.4zM74.5 235.4h1.1v1.1h-1.1zM34.7 186.4h1.4v1.4h-1.4zM54.3 248.4h1.4v1.4h-1.4zM24.7 227.3h1.4v1.4h-1.4zM78.9 241.7h1.1v1.1h-1.1zM83.7 276.4h0.9v0.9h-0.9zM52.7 192.1h1.1v1.1h-1.1zM34.9 254.1h0.9v0.9h-0.9zM100.9 175.9h0.9v0.9h-0.9zM111.4 276.8h1.4v1.4h-1.4zM115.4 228.6h0.7v0.7h-0.7zM91.7 208.0h1.1v1.1h-1.1zM31.4 240.9h0.7v0.7h-0.7zM127.3 246.7h1.8v1.8h-1.8zM24.3 258.2h0.7v0.7h-0.7zM83.2 228.8h0.7v0.7h-0.7zM93.7 204.2h1.1v1.1h-1.1zM101.5 194.4h1.1v1.1h-1.1zM89.6 273.3h0.7v0.7h-0.7zM61.8 270.2h1.1v1.1h-1.1zM39.2 233.2h0.7v0.7h-0.7zM122.9 274.8h1.4v1.4h-1.4zM33.4 175.7h1.8v1.8h-1.8zM106.8 264.4h0.7v0.7h-0.7zM86.2 182.0h1.1v1.1h-1.1zM26.4 265.3h1.8v1.8h-1.8zM101.4 258.6h1.4v1.4h-1.4zM109.8 244.7h1.1v1.1h-1.1zM51.5 233.4h1.4v1.4h-1.4zM73.5 189.6h1.1v1.1h-1.1zM66.2 185.0h1.4v1.4h-1.4zM66.7 165.6h1.1v1.1h-1.1zM111.7 204.3h0.9v0.9h-0.9zM27.7 251.6h0.7v0.7h-0.7zM36.0 264.0h1.1v1.1h-1.1zM128.3 276.3h1.8v1.8h-1.8zM103.9 258.2h1.8v1.8h-1.8zM75.8 248.3h0.9v0.9h-0.9zM128.0 267.9h0.7v0.7h-0.7zM75.4 191.4h1.8v1.8h-1.8zM30.4 194.0h1.8v1.8h-1.8zM128.5 275.7h0.7v0.7h-0.7zM59.8 264.2h1.1v1.1h-1.1zM86.0 261.3h0.9v0.9h-0.9zM62.5 181.2h1.4v1.4h-1.4zM53.3 236.5h1.4v1.4h-1.4zM102.0 209.9h1.8v1.8h-1.8zM60.5 212.6h0.9v0.9h-0.9zM125.5 199.7h1.4v1.4h-1.4zM96.8 170.2h0.7v0.7h-0.7zM51.5 244.6h0.7v0.7h-0.7zM46.8 233.2h0.9v0.9h-0.9zM22.8 184.8h1.4v1.4h-1.4zM62.7 227.9h1.8v1.8h-1.8zM125.2 258.4h1.8v1.8h-1.8zM63.4 272.3h1.4v1.4h-1.4zM52.1 189.8h1.8v1.8h-1.8zM23.8 176.9h0.7v0.7h-0.7zM77.0 242.7h0.9v0.9h-0.9z" fill="#a4a0a2" opacity="0.62"/><path d="M68.3 200.9h1.4v1.4h-1.4zM46.7 227.9h0.7v0.7h-0.7zM76.4 225.4h0.7v0.7h-0.7zM60.2 250.6h1.1v1.1h-1.1zM123.9 207.1h1.1v1.1h-1.1zM47.4 172.6h0.7v0.7h-0.7zM90.5 208.3h1.1v1.1h-1.1zM52.7 227.6h1.1v1.1h-1.1zM61.4 209.2h0.7v0.7h-0.7zM90.0 198.1h0.9v0.9h-0.9zM29.8 203.7h0.9v0.9h-0.9zM33.8 185.7h1.8v1.8h-1.8zM127.2 253.6h1.1v1.1h-1.1zM18.6 190.6h1.4v1.4h-1.4zM93.4 236.1h1.4v1.4h-1.4zM52.7 234.6h0.7v0.7h-0.7zM112.3 218.0h0.7v0.7h-0.7zM91.8 258.8h1.1v1.1h-1.1zM29.3 183.7h0.7v0.7h-0.7zM73.3 222.5h0.7v0.7h-0.7zM66.7 180.0h1.4v1.4h-1.4zM40.5 170.5h1.8v1.8h-1.8zM30.1 184.4h1.1v1.1h-1.1zM31.8 178.0h1.1v1.1h-1.1zM127.8 240.3h0.9v0.9h-0.9zM105.1 243.8h0.9v0.9h-0.9zM120.2 251.2h1.8v1.8h-1.8zM57.2 276.3h0.7v0.7h-0.7zM55.3 237.2h0.7v0.7h-0.7zM39.2 195.3h0.9v0.9h-0.9zM81.3 244.7h1.1v1.1h-1.1zM104.3 202.4h0.7v0.7h-0.7zM55.0 256.0h1.8v1.8h-1.8zM118.5 270.7h1.4v1.4h-1.4zM21.6 232.6h1.8v1.8h-1.8zM33.9 171.2h0.7v0.7h-0.7zM85.6 196.9h1.8v1.8h-1.8zM91.3 205.4h1.8v1.8h-1.8zM69.0 176.7h0.9v0.9h-0.9zM80.6 275.6h0.7v0.7h-0.7zM22.6 248.9h1.4v1.4h-1.4zM101.9 206.3h1.8v1.8h-1.8zM83.8 215.7h1.4v1.4h-1.4zM19.2 270.2h1.4v1.4h-1.4zM40.1 234.3h1.1v1.1h-1.1zM63.1 172.9h1.1v1.1h-1.1zM123.6 263.1h1.4v1.4h-1.4zM33.0 248.9h1.1v1.1h-1.1zM50.3 225.0h1.4v1.4h-1.4zM120.8 234.0h1.8v1.8h-1.8zM34.9 249.3h1.4v1.4h-1.4zM116.3 262.8h0.7v0.7h-0.7zM97.0 179.3h1.8v1.8h-1.8zM73.7 260.1h0.9v0.9h-0.9zM82.9 208.6h1.8v1.8h-1.8zM104.1 168.0h1.8v1.8h-1.8zM31.6 237.1h0.9v0.9h-0.9zM126.2 249.2h0.7v0.7h-0.7zM116.4 169.5h0.9v0.9h-0.9zM36.6 229.8h1.4v1.4h-1.4zM117.8 272.7h0.9v0.9h-0.9zM124.4 252.6h0.9v0.9h-0.9zM27.9 273.7h1.8v1.8h-1.8zM30.6 221.1h1.4v1.4h-1.4zM40.0 164.7h1.8v1.8h-1.8zM87.1 257.0h1.4v1.4h-1.4zM29.8 171.0h1.4v1.4h-1.4zM91.0 260.2h1.1v1.1h-1.1zM95.7 199.0h1.8v1.8h-1.8zM49.5 270.5h0.7v0.7h-0.7zM35.9 209.8h1.8v1.8h-1.8zM125.3 209.0h1.1v1.1h-1.1zM74.5 244.2h1.4v1.4h-1.4zM126.7 212.5h1.4v1.4h-1.4zM34.5 249.8h1.8v1.8h-1.8zM40.8 220.9h1.8v1.8h-1.8zM52.7 227.8h0.7v0.7h-0.7zM37.1 212.2h0.7v0.7h-0.7zM54.8 260.1h0.7v0.7h-0.7zM95.8 182.4h0.7v0.7h-0.7zM116.7 236.6h0.7v0.7h-0.7zM119.9 188.4h0.9v0.9h-0.9zM70.2 177.9h1.1v1.1h-1.1zM84.1 231.2h0.9v0.9h-0.9zM91.3 174.9h1.4v1.4h-1.4zM96.6 228.3h1.1v1.1h-1.1zM63.9 259.9h0.7v0.7h-0.7zM44.4 197.8h1.4v1.4h-1.4zM119.4 227.5h0.7v0.7h-0.7z" fill="#b8e090" opacity="0.62"/><path d="M50.1 171.7h1.8v1.8h-1.8zM97.9 168.6h1.4v1.4h-1.4zM18.0 207.6h1.8v1.8h-1.8zM35.1 222.5h0.7v0.7h-0.7zM20.7 189.7h1.4v1.4h-1.4zM85.4 200.4h1.1v1.1h-1.1zM29.4 217.1h0.9v0.9h-0.9zM121.2 205.4h0.9v0.9h-0.9zM61.2 204.9h1.8v1.8h-1.8zM37.8 163.4h1.4v1.4h-1.4zM122.0 190.8h0.9v0.9h-0.9zM60.1 263.8h0.9v0.9h-0.9zM56.7 200.2h0.9v0.9h-0.9zM91.5 247.6h0.9v0.9h-0.9zM75.6 174.5h1.8v1.8h-1.8zM57.2 235.8h1.4v1.4h-1.4zM82.2 260.4h0.9v0.9h-0.9zM50.5 226.6h1.4v1.4h-1.4zM93.1 197.1h1.8v1.8h-1.8zM20.0 231.3h1.8v1.8h-1.8zM113.6 179.8h1.8v1.8h-1.8zM27.4 230.3h0.9v0.9h-0.9zM90.2 185.9h1.1v1.1h-1.1zM69.5 167.6h1.1v1.1h-1.1zM42.4 208.1h0.7v0.7h-0.7zM78.5 252.8h1.8v1.8h-1.8zM122.6 276.8h1.8v1.8h-1.8zM49.2 173.3h1.4v1.4h-1.4zM102.4 182.3h0.9v0.9h-0.9zM36.7 171.2h0.7v0.7h-0.7zM33.7 188.9h0.9v0.9h-0.9zM88.7 208.8h0.7v0.7h-0.7zM70.0 224.9h1.8v1.8h-1.8zM57.3 242.1h0.7v0.7h-0.7zM77.8 241.6h1.1v1.1h-1.1zM104.1 198.3h1.8v1.8h-1.8zM41.7 267.0h1.4v1.4h-1.4zM94.0 213.4h1.1v1.1h-1.1zM119.8 192.1h1.1v1.1h-1.1zM64.1 217.0h0.7v0.7h-0.7zM29.3 173.1h0.9v0.9h-0.9zM58.6 254.4h0.9v0.9h-0.9zM40.3 186.9h1.8v1.8h-1.8zM64.0 238.1h1.1v1.1h-1.1zM78.5 172.5h1.4v1.4h-1.4zM18.0 183.0h0.9v0.9h-0.9zM67.7 248.6h0.9v0.9h-0.9zM42.2 215.2h0.9v0.9h-0.9zM89.2 228.6h1.4v1.4h-1.4zM125.6 263.4h1.8v1.8h-1.8zM94.7 211.0h0.7v0.7h-0.7zM21.1 255.7h0.7v0.7h-0.7zM113.3 201.6h1.8v1.8h-1.8zM28.9 263.0h0.9v0.9h-0.9zM65.9 176.5h0.9v0.9h-0.9zM51.7 209.6h0.9v0.9h-0.9zM29.3 217.4h1.4v1.4h-1.4zM19.7 215.3h0.7v0.7h-0.7zM92.6 254.2h0.7v0.7h-0.7zM70.8 240.3h0.9v0.9h-0.9zM34.8 269.2h0.9v0.9h-0.9zM43.1 184.1h1.1v1.1h-1.1zM74.0 265.8h0.9v0.9h-0.9zM51.7 181.5h0.9v0.9h-0.9zM74.0 183.9h1.4v1.4h-1.4zM67.5 233.9h0.7v0.7h-0.7zM78.8 263.8h0.7v0.7h-0.7zM48.7 176.0h1.4v1.4h-1.4zM116.0 255.3h0.7v0.7h-0.7zM103.3 242.0h1.1v1.1h-1.1zM125.8 250.9h1.4v1.4h-1.4zM93.7 247.9h0.9v0.9h-0.9zM52.8 166.3h0.9v0.9h-0.9zM126.3 276.2h0.7v0.7h-0.7zM128.6 199.3h1.8v1.8h-1.8zM71.6 246.3h0.9v0.9h-0.9zM97.0 265.1h1.4v1.4h-1.4zM74.6 176.9h0.9v0.9h-0.9zM47.9 251.5h1.4v1.4h-1.4zM127.6 169.2h1.4v1.4h-1.4zM62.6 181.5h0.9v0.9h-0.9zM58.0 192.5h0.9v0.9h-0.9zM28.5 213.1h1.1v1.1h-1.1zM35.9 229.8h0.9v0.9h-0.9zM42.8 210.6h1.8v1.8h-1.8zM31.1 215.9h1.4v1.4h-1.4zM80.3 210.5h0.7v0.7h-0.7zM91.6 253.0h1.8v1.8h-1.8zM110.5 263.2h1.1v1.1h-1.1zM108.2 180.6h1.8v1.8h-1.8zM122.0 251.7h1.4v1.4h-1.4zM78.1 167.6h0.7v0.7h-0.7zM96.4 207.8h0.9v0.9h-0.9zM68.4 169.0h1.4v1.4h-1.4zM83.2 212.7h1.1v1.1h-1.1z" fill="#5fd0c0" opacity="0.62"/><path d="M116.4 243.2h0.9v0.9h-0.9zM86.3 178.8h1.1v1.1h-1.1zM32.1 211.5h1.4v1.4h-1.4zM124.4 236.5h0.9v0.9h-0.9zM86.9 171.9h0.7v0.7h-0.7zM51.5 258.5h0.7v0.7h-0.7zM86.9 233.1h0.9v0.9h-0.9zM84.0 228.9h1.8v1.8h-1.8zM60.1 260.1h1.8v1.8h-1.8zM66.4 251.1h1.1v1.1h-1.1zM56.6 173.9h0.9v0.9h-0.9zM73.3 175.5h0.7v0.7h-0.7zM128.6 249.6h0.9v0.9h-0.9zM94.3 275.0h0.9v0.9h-0.9zM45.2 197.4h1.4v1.4h-1.4zM47.4 189.7h0.9v0.9h-0.9zM35.8 199.6h1.8v1.8h-1.8zM28.5 238.1h1.1v1.1h-1.1zM53.1 271.2h1.4v1.4h-1.4zM123.9 181.7h1.4v1.4h-1.4zM48.4 260.0h1.8v1.8h-1.8zM56.5 172.7h1.8v1.8h-1.8zM110.9 168.4h1.8v1.8h-1.8zM68.2 201.7h0.9v0.9h-0.9zM126.6 169.5h0.9v0.9h-0.9zM117.0 197.6h1.4v1.4h-1.4zM29.1 182.4h1.8v1.8h-1.8zM87.9 229.2h1.1v1.1h-1.1zM126.8 227.3h0.7v0.7h-0.7zM19.5 202.0h0.9v0.9h-0.9zM122.1 198.8h1.1v1.1h-1.1zM55.1 243.3h1.1v1.1h-1.1zM125.7 241.7h0.7v0.7h-0.7zM56.9 243.9h1.4v1.4h-1.4zM47.1 258.9h1.1v1.1h-1.1zM128.7 242.2h1.4v1.4h-1.4zM24.1 240.6h1.1v1.1h-1.1zM33.2 263.3h1.8v1.8h-1.8zM90.0 254.8h1.4v1.4h-1.4zM22.4 257.3h0.7v0.7h-0.7zM62.4 239.7h0.9v0.9h-0.9zM47.2 180.5h0.7v0.7h-0.7zM91.4 183.6h0.9v0.9h-0.9zM79.6 171.2h0.9v0.9h-0.9zM58.0 218.2h0.7v0.7h-0.7zM85.4 192.4h1.4v1.4h-1.4zM28.2 270.5h1.4v1.4h-1.4zM107.0 166.2h1.8v1.8h-1.8zM107.1 271.8h1.1v1.1h-1.1zM55.3 181.7h0.9v0.9h-0.9zM63.0 182.1h0.9v0.9h-0.9zM124.5 274.9h0.9v0.9h-0.9zM107.3 189.1h1.1v1.1h-1.1zM30.1 253.7h0.9v0.9h-0.9zM43.3 234.2h1.8v1.8h-1.8zM28.2 268.5h1.8v1.8h-1.8zM93.1 229.7h1.8v1.8h-1.8zM83.2 245.2h1.1v1.1h-1.1zM88.9 221.0h0.7v0.7h-0.7zM35.3 227.8h0.9v0.9h-0.9zM123.4 276.6h1.4v1.4h-1.4zM111.5 260.3h1.4v1.4h-1.4zM29.5 174.2h0.7v0.7h-0.7zM121.8 165.1h1.1v1.1h-1.1z" fill="#d870c8" opacity="0.62"/></g><g transform="translate(26 19.5) rotate(15)"><circle r="6.2" fill="#e6e4e4"/><path d="M0 0L-6.2 0A6.2 6.2 0 0 1 0 -6.2ZM0 0L6.2 0A6.2 6.2 0 0 1 0 6.2Z" fill="#141414"/></g><g transform="translate(173.9 11.5) rotate(0)"><circle r="7" fill="#e6e4e4"/><path d="M0 0L-7 0A7 7 0 0 1 0 -7ZM0 0L7 0A7 7 0 0 1 0 7Z" fill="#141414"/></g><g transform="translate(19 163) rotate(5)"><circle r="6.2" fill="#e6e4e4"/><path d="M0 0L-6.2 0A6.2 6.2 0 0 1 0 -6.2ZM0 0L6.2 0A6.2 6.2 0 0 1 0 6.2Z" fill="#141414"/></g><g transform="translate(127.4 163.5) rotate(0)"><circle r="7" fill="#e6e4e4"/><path d="M0 0L-7 0A7 7 0 0 1 0 -7ZM0 0L7 0A7 7 0 0 1 0 7Z" fill="#141414"/></g><g transform="translate(24.3 271) rotate(12)"><circle r="6" fill="#e6e4e4"/><path d="M0 0L-6 0A6 6 0 0 1 0 -6ZM0 0L6 0A6 6 0 0 1 0 6Z" fill="#141414"/></g><g transform="translate(129.6 277.6) rotate(8)"><circle r="7" fill="#e6e4e4"/><path d="M0 0L-7 0A7 7 0 0 1 0 -7ZM0 0L7 0A7 7 0 0 1 0 7Z" fill="#141414"/></g><g transform="translate(377.6 118.5) rotate(0)"><circle r="6" fill="#e6e4e4"/><path d="M0 0L-6 0A6 6 0 0 1 0 -6ZM0 0L6 0A6 6 0 0 1 0 6Z" fill="#141414"/></g><g transform="translate(372 267.7) rotate(8)"><circle r="6" fill="#e6e4e4"/><path d="M0 0L-6 0A6 6 0 0 1 0 -6ZM0 0L6 0A6 6 0 0 1 0 6Z" fill="#141414"/></g><path d="M151 115.6L362 118.6Q367 118.8 367 123.5L366 264Q366 269.6 361 270L152 277.4Q147 277.4 147 272.5L147 120Q147 115.6 151 115.6Z" fill="#1b1b1b"/><path d="M153.0 126.0L186.6 126.0L186.6 159.0L153.0 159.0Z" fill="#693e2c"/><path d="M191.3 126.3L225.0 126.3L225.0 159.0L191.3 159.0Z" fill="#c28a76"/><path d="M229.0 126.8L262.0 126.8L262.0 159.0L229.0 159.0Z" fill="#4b6b9e"/><path d="M266.0 127.4L297.5 127.4L297.5 159.0L266.0 159.0Z" fill="#4a5b23"/><path d="M301.0 128.0L331.0 128.0L331.0 159.0L301.0 159.0Z" fill="#9078be"/><path d="M335.0 128.7L363.0 128.7L363.0 159.0L335.0 159.0Z" fill="#69c9b7"/><path d="M153.0 164.0L186.6 164.0L186.6 196.7L153.0 196.7Z" fill="#e07719"/><path d="M191.3 164.0L225.0 164.0L225.0 196.5L191.3 196.5Z" fill="#3b47b5"/><path d="M229.0 164.0L262.0 164.0L262.0 196.4L229.0 196.4Z" fill="#d23c52"/><path d="M266.0 164.0L297.5 164.0L297.5 196.4L266.0 196.4Z" fill="#4a1f5d"/><path d="M301.0 164.0L331.0 164.0L331.0 196.4L301.0 196.4Z" fill="#a2c132"/><path d="M334.5 164.0L362.5 164.0L362.5 194.6L334.5 194.6Z" fill="#e7a01d"/><path d="M153.0 201.3L186.6 201.3L186.6 233.6L153.0 233.6Z" fill="#1c2191"/><path d="M190.3 200.9L224.0 200.7L223.9 232.6L190.2 232.8Z" fill="#3a973b"/><path d="M228.3 201.5L261.3 201.1L261.0 232.5L228.0 232.9Z" fill="#c51d25"/><path d="M265.4 200.6L296.9 200.0L296.5 231.6L265.0 232.2Z" fill="#e7c51d"/><path d="M300.2 199.8L330.2 199.0L329.6 230.0L299.6 230.8Z" fill="#d5479a"/><path d="M333.4 199.0L361.4 198.0L360.7 228.2L332.7 229.2Z" fill="#2991c5"/><path d="M153.0 238.0L186.6 238.0L186.6 269.1L153.0 269.1Z" fill="#e8e6e4"/><path d="M190.0 238.2L223.7 237.8L223.5 268.8L189.8 269.2Z" fill="#d2d0ce"/><path d="M227.4 238.0L260.4 237.4L259.9 267.9L226.9 268.5Z" fill="#a9a7a5"/><path d="M264.0 236.3L295.5 235.3L294.8 266.0L263.3 267.0Z" fill="#7c7c7a"/><path d="M298.8 234.6L328.8 233.4L327.8 264.1L297.8 265.3Z" fill="#4f4f4f"/><path d="M332.0 232.3L360.0 230.7L358.8 261.2L330.8 262.8Z" fill="#181818"/><text x="152.6" y="123.1" font-family="Liberation Sans, sans-serif" font-size="5.3" fill="#bdbdbd" letter-spacing="-0.1">color<tspan font-weight="bold" fill="#f4f4f4">checker</tspan><tspan font-size="4.4" dx="0.8">CLASSIC</tspan></text><text x="312" y="270.6" font-family="Liberation Sans, sans-serif" font-size="4.9" font-style="italic" fill="#b8b8b8" letter-spacing="0.1" transform="rotate(-2.6 312 270.6)">munsellcolorlab</text><text x="153" y="275.6" font-family="Liberation Sans, sans-serif" font-size="4" font-weight="bold" fill="#d0d0d0">x-rite</text><path d="M151.5 269.8h2.4M152.7 268.6v2.4" stroke="#d0d0d0" stroke-width="0.5"/></g><rect x="0.5" y="0.5" width="392" height="303" fill="none" stroke="#262626" stroke-width="1"/>
</svg>
</div>

<!-- ============ PANEL 2 : Chart Design ============ -->
<div class="panel" id="p2" style="top:419px;height:108px;">
  <div class="wline" style="left:0;top:0;width:1120px;height:1px"></div>
  <div class="wline" style="left:0;top:0;width:1px;height:13px"></div>
  <div class="gline" style="left:0;top:13px;width:1120px;height:1px"></div>
  <div class="wline" style="left:1px;top:14px;width:1117px;height:1px"></div>
  <div class="gline" style="left:0;top:13px;width:1px;height:94px"></div>
  <div class="wline" style="left:1px;top:14px;width:1px;height:92px"></div>
  <div class="gline" style="left:1118px;top:15px;width:1px;height:92px"></div>
  <div class="wline" style="left:1119px;top:13px;width:1px;height:95px"></div>
  <div class="gline" style="left:0;top:106px;width:1119px;height:1px"></div>
  <div class="wline" style="left:0;top:107px;width:1120px;height:1px"></div>
  <div class="ptitle t" style="left:5px;top:4px;font-size:21.67px;height:22px;line-height:24px;padding-right:6px;-webkit-text-stroke:0.08px #000;">Chart Design</div>

  <span class="t f16" style="left:302px;top:34px;letter-spacing:-0.035px;">Chart Definition JSON</span>
  <div class="edit f16" style="left:4px;top:55px;width:759px;height:25px;"><span class="t" style="left:1.5px;top:5px;">C:\Users\skerr\Documents\Documentation\sample files\arbcharts-20230405T214129Z-001\arbcharts\dist</span></div>
  <div class="btn" style="left:764px;top:56px;width:124px;height:23px;line-height:23px;">Select File</div>
  <span class="t f16" style="left:22px;top:84px;">Design Name :</span>
  <span class="t f16" style="left:437.5px;top:84px;letter-spacing:-0.055px;">Webcam_Studio_Chart</span>
  <div class="btn" style="left:891px;top:80px;width:224px;height:23px;line-height:23px;">Chart Definition Utility</div>
  <svg id="cdicon" style="left:972px;top:29px;width:62px;height:44px" viewBox="0 0 62 44"><defs><filter id="cdb" color-interpolation-filters="sRGB"><feGaussianBlur stdDeviation="0.4"/></filter></defs><rect x="0.58" y="0.79" width="59.9" height="42.09" fill="#000"/><rect x="1.77" y="3.98" width="2.4" height="18.77" fill="#6e6e6e"/><rect x="1.77" y="19.96" width="20.37" height="3.19" fill="#6e6e6e"/><rect x="22.14" y="1.98" width="3.19" height="3.59" fill="#6e6e6e"/><rect x="4.97" y="3.18" width="15.97" height="15.18" fill="#737373"/><rect x="23.34" y="6.38" width="3.19" height="9.58" fill="#111" stroke="#555" stroke-width="0.4"/><rect x="24.7" y="7.18" width="1.2" height="4.39" fill="#d0d0d0"/><path d="M7.76 21.15L17.35 20.91L17.11 22.99L12.16 21.95Z" fill="#e8e8e8"/><rect x="27.97" y="1.58" width="32.11" height="14.78" fill="#727272" stroke="#f00" stroke-width="1.4"/><rect x="22.14" y="17.96" width="37.54" height="24.36" fill="#6e6e6e"/><rect x="23.34" y="19.16" width="32.75" height="21.41" fill="#000"/><rect x="56.88" y="17.4" width="3.19" height="2.16" fill="#000"/><rect x="56.88" y="39.92" width="3.19" height="2.96" fill="#000"/><g filter="url(#cdb)"><rect x="25.04" y="20.8" width="2.5" height="2.3" fill="#8a5a48"/><rect x="30.32" y="20.8" width="2.5" height="2.3" fill="#d8a08c"/><rect x="35.67" y="20.8" width="2.5" height="2.3" fill="#5a84b8"/><rect x="41.1" y="20.8" width="2.5" height="2.3" fill="#62763a"/><rect x="46.37" y="20.8" width="2.5" height="2.3" fill="#9a88c8"/><rect x="51.8" y="20.8" width="2.5" height="2.3" fill="#62c8b8"/><rect x="25.04" y="26.07" width="2.5" height="2.3" fill="#e88428"/><rect x="30.32" y="26.07" width="2.5" height="2.3" fill="#4460c0"/><rect x="35.67" y="26.07" width="2.5" height="2.3" fill="#d8506a"/><rect x="41.1" y="26.07" width="2.5" height="2.3" fill="#6a3a88"/><rect x="46.37" y="26.07" width="2.5" height="2.3" fill="#a8c840"/><rect x="51.8" y="26.07" width="2.5" height="2.3" fill="#eaa828"/><rect x="25.04" y="31.43" width="2.5" height="2.3" fill="#2a44a8"/><rect x="30.32" y="31.43" width="2.5" height="2.3" fill="#3e9a50"/><rect x="35.67" y="31.43" width="2.5" height="2.3" fill="#c83a40"/><rect x="41.1" y="31.43" width="2.5" height="2.3" fill="#f0d020"/><rect x="46.37" y="31.43" width="2.5" height="2.3" fill="#cc58a8"/><rect x="51.8" y="31.43" width="2.5" height="2.3" fill="#1e9ab8"/><rect x="25.04" y="36.78" width="2.5" height="2.3" fill="#fafafa"/><rect x="30.32" y="36.78" width="2.5" height="2.3" fill="#dadada"/><rect x="35.67" y="36.78" width="2.5" height="2.3" fill="#b4b4b4"/><rect x="41.1" y="36.78" width="2.5" height="2.3" fill="#888888"/><rect x="46.37" y="36.78" width="2.5" height="2.3" fill="#5e5e5e"/><rect x="51.8" y="36.78" width="2.5" height="2.3" fill="#383838"/></g><rect x="6.41" y="29.14" width="0.9" height="0.9" fill="#fff" opacity="0.5"/><rect x="8.96" y="30.34" width="0.9" height="0.9" fill="#fff" opacity="0.9"/><rect x="11.36" y="31.94" width="0.9" height="0.9" fill="#fff" opacity="0.9"/><rect x="13.35" y="29.54" width="0.9" height="0.9" fill="#fff" opacity="0.5"/><rect x="15.35" y="27.14" width="0.9" height="0.9" fill="#fff" opacity="0.7"/><rect x="17.35" y="26.35" width="0.9" height="0.9" fill="#fff" opacity="0.9"/><rect x="17.35" y="29.54" width="0.9" height="0.9" fill="#fff" opacity="0.7"/><rect x="5.93" y="33.13" width="0.9" height="0.9" fill="#fff" opacity="0.9"/><rect x="8.96" y="36.73" width="0.9" height="0.9" fill="#fff" opacity="0.9"/><rect x="11.76" y="35.93" width="0.9" height="0.9" fill="#fff" opacity="0.5"/><rect x="12.16" y="38.33" width="0.9" height="0.9" fill="#fff" opacity="0.9"/><rect x="14.95" y="33.53" width="0.9" height="0.9" fill="#fff" opacity="0.5"/><rect x="17.35" y="35.53" width="0.9" height="0.9" fill="#fff" opacity="0.7"/><rect x="5.93" y="39.52" width="0.9" height="0.9" fill="#fff" opacity="0.7"/><rect x="17.35" y="39.92" width="0.9" height="0.9" fill="#fff" opacity="0.9"/><rect x="7.76" y="26.35" width="0.9" height="0.9" fill="#fff" opacity="0.5"/><rect x="12.96" y="34.33" width="0.9" height="0.9" fill="#fff" opacity="0.5"/><rect x="10.56" y="27.94" width="0.9" height="0.9" fill="#fff" opacity="0.9"/><rect x="10.96" y="37.69" width="2.2" height="1" fill="#fff"/><text x="4.81" y="12.93" font-family="Liberation Mono, monospace" font-weight="bold" font-size="7.6" fill="#00ff00" letter-spacing="0.6">Star</text></svg>
</div>

<!-- ============ PANEL 3 : Module Settings ============ -->
<div class="panel" id="p3" style="top:534px;height:372px;">
  <div class="wline" style="left:0;top:0;width:1120px;height:1px"></div>
  <div class="wline" style="left:0;top:0;width:1px;height:9px"></div>
  <div class="gline" style="left:0;top:9px;width:1120px;height:1px"></div>
  <div class="wline" style="left:1px;top:10px;width:1117px;height:1px"></div>
  <div class="gline" style="left:0;top:9px;width:1px;height:362px"></div>
  <div class="wline" style="left:1px;top:10px;width:1px;height:360px"></div>
  <div class="gline" style="left:1118px;top:11px;width:1px;height:360px"></div>
  <div class="wline" style="left:1119px;top:9px;width:1px;height:363px"></div>
  <div class="gline" style="left:0;top:370px;width:1119px;height:1px"></div>
  <div class="wline" style="left:0;top:371px;width:1120px;height:1px"></div>
  <div class="ptitle t" style="left:5px;top:3px;font-size:16px;letter-spacing:-0.08px;height:16px;line-height:18px;padding-right:5px;">Module Settings</div>
</div>

<!-- settings list, absolute page coordinates -->
<div id="list" style="left:0;top:0;width:1127px;height:977px;">
<div class="gline" style="left:17px;top:577px;width:1065px;height:1px"></div>
<div class="wline" style="left:18px;top:578px;width:1063px;height:1px"></div>
<div class="gline" style="left:17px;top:577px;width:1px;height:243px"></div>
<div class="wline" style="left:18px;top:578px;width:1px;height:241px"></div>
<div class="gline" style="left:1081px;top:579px;width:1px;height:240px"></div>
<div class="wline" style="left:1082px;top:577px;width:1px;height:243px"></div>
<div class="gline" style="left:17px;top:819px;width:1065px;height:1px"></div>
<div class="wline" style="left:17px;top:820px;width:1066px;height:1px"></div>
<div class="ptitle t" style="left:490px;top:569px;font-size:18.5px;letter-spacing:-0.15px;height:18px;line-height:20px;padding:0 6px 0 2px;">Slanted edges</div>
<div class="row" style="top:589px;height:22px"></div>
<span class="lbl" style="top:591px">Do MTF analysis on all edges present</span>
<span class="lbl" style="top:614px">Image channel to run MTF analysis on</span>
<div class="row" style="top:634px;height:22px"></div>
<span class="lbl" style="top:636px;letter-spacing:-0.1px">Do LCA analysis on all edges present</span>
<span class="lbl" style="top:659px;letter-spacing:-0.16px">Fill factor for slanted edge ROI (portion of maximum area to use)</span>
<div class="row" style="top:679px;height:22px"></div>
<span class="lbl" style="top:681px">Edge SFR Algorithm Settings (overrides other options)</span>
<span class="lbl" style="top:704px;letter-spacing:-0.175px">Use modified apodization noise reduction (recommended)</span>
<div class="row" style="top:724px;height:22px"></div>
<span class="lbl" style="top:726px;letter-spacing:-0.18px">Use edge non-uniformity correction (recommended)</span>
<span class="lbl" style="top:749px;letter-spacing:-0.21px">Use edge discrete derivative correction (recommended)</span>
<div class="row" style="top:769px;height:22px"></div>
<span class="lbl dis" style="top:771px">Apodization Function</span>
<span class="lbl dis" style="top:794px">Edge Fit Order</span>
<div class="cb" style="top:592px"><svg viewBox="0 0 14 14"><path d="M2.1 7.1L5.3 10.3L12 3.3" stroke="#3c3c3c" stroke-width="1.35" fill="none"/></svg></div>
<div class="cb" style="top:637px"><svg viewBox="0 0 14 14"><path d="M2.1 7.1L5.3 10.3L12 3.3" stroke="#3c3c3c" stroke-width="1.35" fill="none"/></svg></div>
<div class="cb" style="top:705px"><svg viewBox="0 0 14 14"><path d="M2.1 7.1L5.3 10.3L12 3.3" stroke="#3c3c3c" stroke-width="1.35" fill="none"/></svg></div>
<div class="cb" style="top:727px"><svg viewBox="0 0 14 14"><path d="M2.1 7.1L5.3 10.3L12 3.3" stroke="#3c3c3c" stroke-width="1.35" fill="none"/></svg></div>
<div class="cb" style="top:750px"><svg viewBox="0 0 14 14"><path d="M2.1 7.1L5.3 10.3L12 3.3" stroke="#3c3c3c" stroke-width="1.35" fill="none"/></svg></div>
<div class="grip" style="top:619px"><b style="top:0"></b><i style="top:1px"></i><b style="top:4px"></b><i style="top:5px"></i><b style="top:8px"></b><i style="top:9px"></i></div>
<div class="ed2" style="top:612px;line-height:22px;">Y</div>
<div class="grip" style="top:664px"><b style="top:0"></b><i style="top:1px"></i><b style="top:4px"></b><i style="top:5px"></i><b style="top:8px"></b><i style="top:9px"></i></div>
<div class="ed2" style="top:657px;line-height:22px;">0.9</div>
<div class="combo" style="top:679px;background:#fff;color:#000;"><span class="t" style="left:2px;top:5px">Imatest 22.1 (recommended)</span><div style="left:230px;top:0;width:18px;height:21px;background:#e1e1e1"></div><svg style="left:234px;top:8px;width:11px;height:7px" viewBox="0 0 11 7"><path d="M1 1L5.5 5.5L10 1" stroke="#333" stroke-width="1.2" fill="none"/></svg></div>
<div class="combo" style="top:769px;background:#f0f0f0;color:#6d6d6d;-webkit-text-stroke:0;"><span class="t" style="left:2px;top:5px">Hann</span><div style="left:230px;top:0;width:18px;height:21px;background:#cfcfcf"></div><svg style="left:234px;top:8px;width:11px;height:7px" viewBox="0 0 11 7"><path d="M1 1L5.5 5.5L10 1" stroke="#b4b4b4" stroke-width="1.2" fill="none"/></svg></div>
<div class="grip" style="top:799px"><b style="top:0"></b><i style="top:1px"></i><b style="top:4px"></b><i style="top:5px"></i><b style="top:8px"></b><i style="top:9px"></i></div>
<div class="ed2" style="top:792px;line-height:22px;background:#f0f0f0;color:#6d6d6d;-webkit-text-stroke:0;">5</div>
<div class="gline" style="left:17px;top:833px;width:1065px;height:1px"></div>
<div class="wline" style="left:18px;top:834px;width:1063px;height:1px"></div>
<div class="gline" style="left:17px;top:833px;width:1px;height:58px"></div>
<div class="wline" style="left:18px;top:834px;width:1px;height:57px"></div>
<div class="gline" style="left:1081px;top:835px;width:1px;height:56px"></div>
<div class="wline" style="left:1082px;top:833px;width:1px;height:58px"></div>
<div class="ptitle t" style="left:480.5px;top:825px;font-size:18.5px;letter-spacing:-0.15px;height:18px;line-height:20px;padding:0 6px 0 2px;">Random Texture</div>
<div class="row" style="top:845px;height:22px"></div>
<span class="lbl" style="top:847px;letter-spacing:-0.115px">Do MTF analysis on spilled coins patterns present</span>
<div class="cb" style="top:848px"><svg viewBox="0 0 14 14"><path d="M2.1 7.1L5.3 10.3L12 3.3" stroke="#3c3c3c" stroke-width="1.35" fill="none"/></svg></div>
<span class="lbl" style="top:870px;letter-spacing:-0.1px">Image channel to run Texture analysis on</span>
<div class="grip" style="top:875px"><b style="top:0"></b><i style="top:1px"></i><b style="top:4px"></b><i style="top:5px"></i><b style="top:8px"></b><i style="top:9px"></i></div>
<div class="ed2" style="top:868px;line-height:22px;">Y</div>
<div style="left:19px;top:890px;width:931px;height:1px;background:#d4d4d4"></div>
<div style="left:956px;top:890px;width:125px;height:1px;background:#b0b0b8"></div>
<div id="sb" style="left:1083px;top:567px;width:25px;height:324px;background:#f0f0f0;"><div style="left:0;top:0;width:1px;height:324px;background:#a0a0a0"></div><div style="left:24px;top:0;width:1px;height:324px;background:#696969"></div><div style="left:0;top:0px;width:25px;height:15px;background:#f0f0f0;border-top:1px solid #fff;border-left:1px solid #fff;border-right:1px solid #696969;border-bottom:1px solid #696969"><div style="left:0;top:0;width:23px;height:13px;border-right:1px solid #a0a0a0;border-bottom:1px solid #a0a0a0"></div><svg style="left:7px;top:4px;width:8px;height:5px" viewBox="0 0 8 5"><path d="M0 4.6L4 0.4L8 4.6Z" fill="#606060"/></svg></div><div style="left:0;top:15px;width:25px;height:54px;background:#f0f0f0;border-top:1px solid #fff;border-left:1px solid #fff;border-right:1px solid #696969;border-bottom:1px solid #696969"><div style="left:0;top:0;width:23px;height:52px;border-right:1px solid #a0a0a0;border-bottom:1px solid #a0a0a0"></div></div><div style="left:0;top:309px;width:25px;height:15px;background:#f0f0f0;border-top:1px solid #fff;border-left:1px solid #fff;border-right:1px solid #696969;border-bottom:1px solid #696969"><div style="left:0;top:0;width:23px;height:13px;border-right:1px solid #a0a0a0;border-bottom:1px solid #a0a0a0"></div><svg style="left:7px;top:5px;width:8px;height:5px" viewBox="0 0 8 5"><path d="M0 0.4L4 4.6L8 0.4Z" fill="#606060"/></svg></div></div>
</div>

<!-- ============ PANEL 4 : buttons ============ -->
<div class="panel" id="p4" style="top:912px;height:61px;">
  <div class="wline" style="left:0;top:0;width:1120px;height:1px"></div>
  <div class="gline" style="left:0;top:0;width:1px;height:60px"></div>
  <div class="gline" style="left:1118px;top:1px;width:1px;height:59px"></div>
  <div class="wline" style="left:1119px;top:0;width:1px;height:61px"></div>
  <div class="gline" style="left:0;top:59px;width:1119px;height:1px"></div>
  <div class="wline" style="left:0;top:60px;width:1120px;height:1px"></div>
  <div class="btn" style="left:5px;top:5px;width:223px;height:50px;line-height:50px;font-size:18.67px;font-weight:bold;-webkit-text-stroke:0;">Run Analysis</div>
  <div class="btn dis" style="left:666px;top:5px;width:223px;height:50px;line-height:51px;letter-spacing:-0.27px;">Open last output folder</div>
  <div class="btn dis" style="left:891px;top:5px;width:223px;height:50px;line-height:51px;letter-spacing:-0.23px;">View last result JSON</div>
</div>
</body>
</html>
